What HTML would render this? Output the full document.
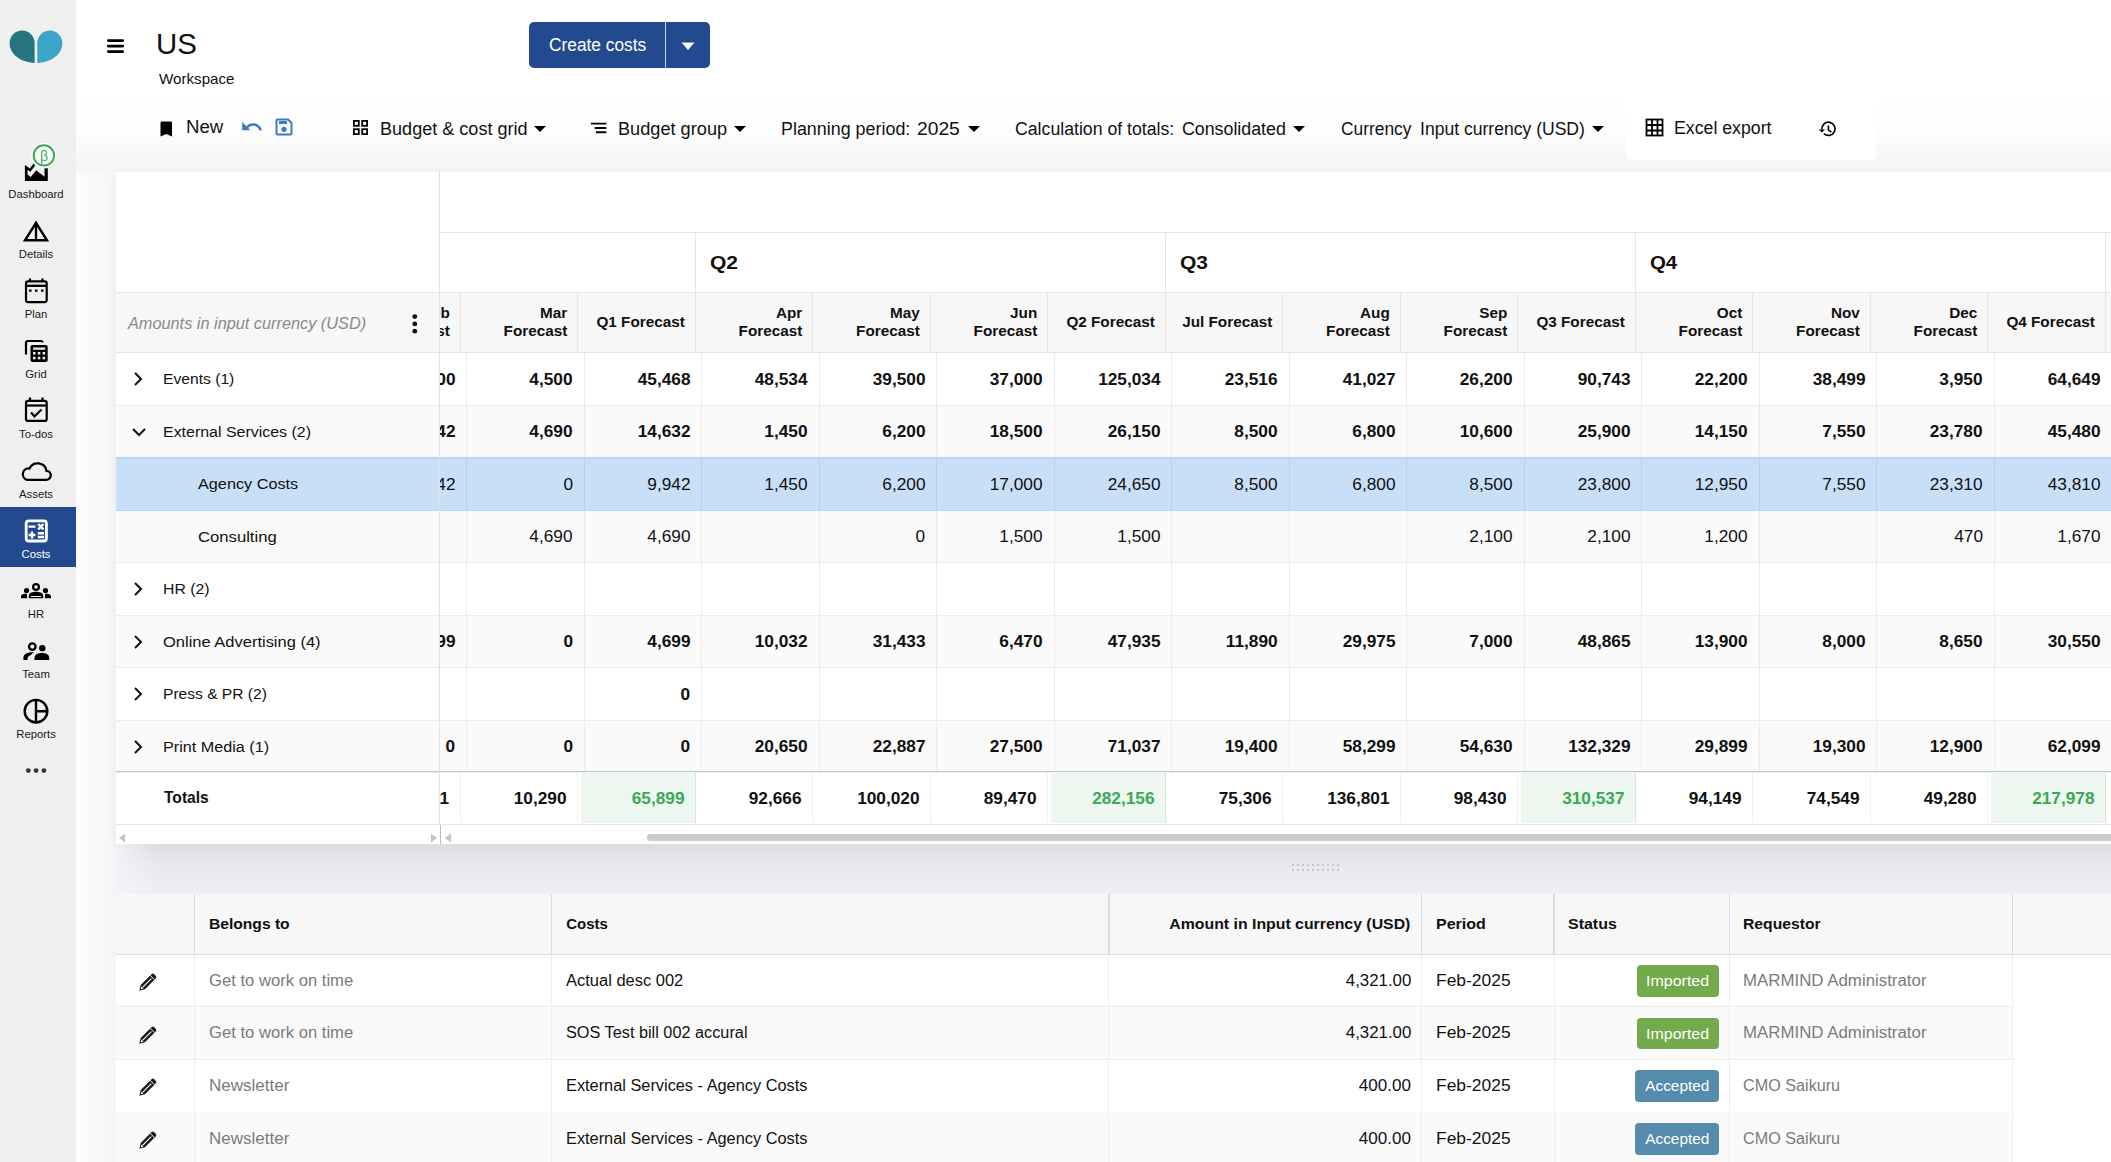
<!DOCTYPE html>
<html><head><meta charset="utf-8"><title>Costs</title>
<style>
html,body{margin:0;padding:0;}
body{width:2111px;height:1162px;overflow:hidden;position:relative;background:#fff;font-family:"Liberation Sans",sans-serif;}
.t{position:absolute;white-space:nowrap;}
.b{position:absolute;}
svg{position:absolute;overflow:visible;}
.clip{position:absolute;overflow:hidden;}
</style></head><body>
<div class="b" style="left:76.00px;top:0.00px;width:2035.00px;height:1162.00px;background:#f6f7f9;"></div>
<div class="b" style="left:76.00px;top:172.00px;width:40.00px;height:990.00px;background:linear-gradient(to right,#fcfcfd,#f4f5f8);"></div>
<div class="b" style="left:76.00px;top:0.00px;width:2035.00px;height:96.00px;background:#fff;"></div>
<div class="b" style="left:76.00px;top:96.00px;width:2035.00px;height:76.00px;background:linear-gradient(#fff,#fdfdfd 45%,#f4f4f5);"></div>
<div class="b" style="left:0.00px;top:0.00px;width:76.00px;height:1162.00px;background:#efeff0;"></div>
<div class="b" style="left:0.00px;top:507.00px;width:76.00px;height:60.00px;background:#234a8f;"></div>
<svg width="76" height="800" style="left:0;top:0" viewBox="0 0 76 800">
<path d="M34.6,63 L34.6,43 A12.5,12.5 0 0 0 9.6,43 C9.6,54 20,62 34.6,63 Z" fill="#277381"/>
<path d="M37.3,63 L37.3,43 A12.5,12.5 0 0 1 62.3,43 C62.3,54 52,62 37.3,63 Z" fill="#3ca4c6"/>
<path d="M24.9,165 L29.9,168.5 L33.5,163.4 L35.2,165.5 L30.3,171.8 L27.5,170.1 L27.5,174.6 L30.8,177 L36.2,170.3 L44.5,176.8 L44.5,168.6 L47.8,168.2 L47.8,180.9 L24.9,180.9 Z" fill="#000"/>
<circle cx="43.9" cy="155.4" r="12.6" fill="#fff"/>
<circle cx="43.9" cy="155.4" r="10.2" fill="#fff" stroke="#3aaa55" stroke-width="2"/>
<text x="44" y="161" font-size="14" text-anchor="middle" fill="#3aaa55" font-family="Liberation Sans">β</text>
<path d="M36,222.8 L46.9,240.2 L25.1,240.2 Z" fill="none" stroke="#000" stroke-width="2.5" stroke-linejoin="miter"/>
<path d="M36,224 L36,241" stroke="#000" stroke-width="2.3"/>
<rect x="26" y="281.3" width="20.7" height="20.8" rx="2" fill="none" stroke="#000" stroke-width="2.2"/>
<path d="M26,285.8 L46.7,285.8" stroke="#000" stroke-width="2.4"/>
<path d="M30,278.5 L30,282 M42.5,278.5 L42.5,282" stroke="#000" stroke-width="2.2"/>
<path d="M29,290.6 L31.5,290.6 M35,290.6 L37.5,290.6 M41,290.6 L43.5,290.6" stroke="#000" stroke-width="2.2"/>
<path d="M26,354.5 L26,343 A2,2 0 0 1 28,341 L41,341 A1.5,1.5 0 0 1 42.5,342.5" fill="none" stroke="#000" stroke-width="2.2"/>
<rect x="30.5" y="345" width="17.2" height="17" rx="2" fill="#000"/>
<rect x="33" y="347.5" width="12.2" height="2.2" fill="#efeff1"/>
<g fill="#efeff1"><rect x="33" y="352" width="2.5" height="2.5"/><rect x="37.8" y="352" width="2.5" height="2.5"/><rect x="42.6" y="352" width="2.5" height="2.5"/>
<rect x="33" y="356.8" width="2.5" height="2.5"/><rect x="37.8" y="356.8" width="2.5" height="2.5"/><rect x="42.6" y="356.8" width="2.5" height="2.5"/></g>
<rect x="26" y="400.9" width="20.7" height="20" rx="2" fill="none" stroke="#000" stroke-width="2.2"/>
<path d="M26,405.5 L46.7,405.5" stroke="#000" stroke-width="2.2"/>
<path d="M30,397.5 L30,401 M42.5,397.5 L42.5,401" stroke="#000" stroke-width="2.2"/>
<path d="M31,412.5 L34.5,416.5 L41.5,409.5" fill="none" stroke="#000" stroke-width="2.2"/>
<path d="M27,479.8 L46,479.8 A4.5,4.5 0 0 0 46.5,470.8 A9,9 0 0 0 29.5,468.5 A5.8,5.8 0 0 0 27,479.8 Z" fill="none" stroke="#000" stroke-width="2.3"/>
<rect x="26.2" y="520.8" width="20.2" height="20.2" rx="2.5" fill="none" stroke="#fff" stroke-width="2.8"/>
<g stroke="#fff" stroke-width="2.4"><path d="M28.6,526.6 L35.4,526.6 M38.2,524 L43.4,529.4 M43.4,524 L38.2,529.4 M28.6,535 L35.4,535 M32,531.6 L32,538.4 M37.8,533.2 L44,533.2 M37.8,537 L44,537"/></g>
<circle cx="36" cy="587" r="2.9" fill="none" stroke="#000" stroke-width="2.2"/>
<path d="M28.8,598.3 L28.8,596 C28.8,592.5 33,591.8 36,591.8 C39,591.8 43.2,592.5 43.2,596 L43.2,598.3 Z" fill="#000"/>
<path d="M31,596.5 L41,596.5" stroke="#efeff1" stroke-width="1"/>
<circle cx="26.5" cy="590.5" r="2.6" fill="#000"/><circle cx="45.5" cy="590.5" r="2.6" fill="#000"/>
<path d="M21,598.3 L21,596.5 C21,594.3 24,593.8 27,593.8 L27,598.3 Z M51,598.3 L51,596.5 C51,594.3 48,593.8 45,593.8 L45,598.3 Z" fill="#000"/>
<circle cx="32.3" cy="646.6" r="3.3" fill="none" stroke="#000" stroke-width="2.3"/>
<path d="M23.4,660 L23.4,657.5 C23.4,654 28,652.3 32,652.3 L34,652.3 L30,655.5 C28,656.5 27.5,657.3 27.5,660 Z" fill="#000"/>
<circle cx="42.3" cy="648.3" r="3.2" fill="#000"/>
<path d="M34.5,660 L34.5,658 C34.5,654 38.5,653 42,653 C45.5,653 49.2,654 49.2,658 L49.2,660 Z" fill="#000"/>
<circle cx="36" cy="711.2" r="11.3" fill="none" stroke="#000" stroke-width="2.4"/>
<path d="M36,700 L36,722.5 M36,711.2 L47.3,711.2" stroke="#000" stroke-width="2.4"/>
<circle cx="28.3" cy="770.6" r="2.4" fill="#333"/><circle cx="36.1" cy="770.6" r="2.4" fill="#333"/><circle cx="43.9" cy="770.6" r="2.4" fill="#333"/>
</svg>
<div class="t " style="left:-264.00px;width:600px;text-align:center;top:182.08px;font-size:11.3px;line-height:24px;font-weight:normal;color:#1a1a1a;font-style:normal;">Dashboard</div>
<div class="t " style="left:-264.00px;width:600px;text-align:center;top:242.08px;font-size:11.3px;line-height:24px;font-weight:normal;color:#1a1a1a;font-style:normal;">Details</div>
<div class="t " style="left:-264.00px;width:600px;text-align:center;top:302.08px;font-size:11.3px;line-height:24px;font-weight:normal;color:#1a1a1a;font-style:normal;">Plan</div>
<div class="t " style="left:-264.00px;width:600px;text-align:center;top:362.08px;font-size:11.3px;line-height:24px;font-weight:normal;color:#1a1a1a;font-style:normal;">Grid</div>
<div class="t " style="left:-264.00px;width:600px;text-align:center;top:422.08px;font-size:11.3px;line-height:24px;font-weight:normal;color:#1a1a1a;font-style:normal;">To-dos</div>
<div class="t " style="left:-264.00px;width:600px;text-align:center;top:482.08px;font-size:11.3px;line-height:24px;font-weight:normal;color:#1a1a1a;font-style:normal;">Assets</div>
<div class="t " style="left:-264.00px;width:600px;text-align:center;top:542.08px;font-size:11.3px;line-height:24px;font-weight:normal;color:#fff;font-style:normal;">Costs</div>
<div class="t " style="left:-264.00px;width:600px;text-align:center;top:602.08px;font-size:11.3px;line-height:24px;font-weight:normal;color:#1a1a1a;font-style:normal;">HR</div>
<div class="t " style="left:-264.00px;width:600px;text-align:center;top:662.08px;font-size:11.3px;line-height:24px;font-weight:normal;color:#1a1a1a;font-style:normal;">Team</div>
<div class="t " style="left:-264.00px;width:600px;text-align:center;top:722.08px;font-size:11.3px;line-height:24px;font-weight:normal;color:#1a1a1a;font-style:normal;">Reports</div>
<svg width="20" height="20" style="left:106px;top:37px" viewBox="0 0 20 20"><path d="M2.3,3.6 L16.7,3.6 M2.3,9.1 L16.7,9.1 M2.3,14.6 L16.7,14.6" stroke="#000" stroke-width="2.75" stroke-linecap="round"/></svg>
<div class="t " style="left:155.50px;top:32.40px;font-size:30px;line-height:24px;font-weight:normal;color:#111;font-style:normal;"><span style="display:inline-block;transform:scaleX(0.9792);transform-origin:left center">US</span></div>
<div class="t " style="left:158.50px;top:66.80px;font-size:15px;line-height:24px;font-weight:normal;color:#111;font-style:normal;"><span style="display:inline-block;transform:scaleX(1.0101);transform-origin:left center">Workspace</span></div>
<div class="b" style="left:529.00px;top:22.00px;width:181.00px;height:46.00px;background:#234a8f;border-radius:5px;"></div>
<div class="b" style="left:664.80px;top:22.00px;width:1.20px;height:46.00px;background:#c9d4e8;"></div>
<div class="t " style="left:549.00px;top:33.13px;font-size:17.5px;line-height:24px;font-weight:normal;color:#fff;font-style:normal;"><span style="display:inline-block;transform:scaleX(0.9899);transform-origin:left center">Create costs</span></div>
<svg width="14" height="9" style="left:681px;top:41.5px" viewBox="0 0 14 9"><path d="M0.5,0.5 L13.5,0.5 L7,8 Z" fill="#fff"/></svg>
<svg width="14" height="18" style="left:159px;top:119px" viewBox="0 0 14 18"><path d="M1.5,3.8 Q1.5,2.4 3,2.4 L11.5,2.4 Q13,2.4 13,3.8 L13,17.4 L7.25,15 L1.5,17.4 Z" fill="#000"/></svg>
<div class="t " style="left:185.50px;top:114.76px;font-size:18px;line-height:24px;font-weight:normal;color:#111;font-style:normal;"><span style="display:inline-block;transform:scaleX(1.0363);transform-origin:left center">New</span></div>
<svg width="22" height="14" style="left:241px;top:120px" viewBox="0 0 22 14"><path d="M5.4,8.2 C8.5,3.4 16.8,2.2 19.8,10.4" fill="none" stroke="#3d7ac4" stroke-width="2.5"/><path d="M1.2,1.9 L1.2,10.3 L9.4,10.3 Z" fill="#3d7ac4"/></svg>
<svg width="20" height="20" style="left:274px;top:117px" viewBox="0 0 20 20"><path d="M3.5,2.5 L14,2.5 L17.5,6 L17.5,16.5 Q17.5,17.5 16.5,17.5 L3.5,17.5 Q2.5,17.5 2.5,16.5 L2.5,3.5 Q2.5,2.5 3.5,2.5 Z" fill="none" stroke="#3d7ac4" stroke-width="2"/><rect x="5" y="4" width="8" height="3" fill="#3d7ac4"/><circle cx="10" cy="12.3" r="2.6" fill="#3d7ac4"/></svg>
<svg width="18" height="18" style="left:352px;top:119px" viewBox="0 0 18 18"><g fill="none" stroke="#000" stroke-width="1.8"><rect x="1.9" y="1.9" width="4.9" height="4.9"/><rect x="10.2" y="1.9" width="4.9" height="4.9"/><rect x="1.9" y="10.2" width="4.9" height="4.9"/><rect x="10.2" y="10.2" width="4.9" height="4.9"/></g></svg>
<div class="t " style="left:379.50px;top:116.96px;font-size:18px;line-height:24px;font-weight:normal;color:#111;font-style:normal;"><span style="display:inline-block;transform:scaleX(1.0032);transform-origin:left center">Budget &amp; cost grid</span></div>
<svg width="12" height="8" style="left:534px;top:125px" viewBox="0 0 12 8"><path d="M0,1 L12,1 L6,7 Z" fill="#000"/></svg>
<svg width="18" height="14" style="left:590px;top:122px" viewBox="0 0 18 14"><path d="M1,1.6 L16.4,1.6 M4.6,6 L16.4,6 M6,10.3 L16.4,10.3" stroke="#000" stroke-width="1.9"/></svg>
<div class="t " style="left:617.50px;top:116.96px;font-size:18px;line-height:24px;font-weight:normal;color:#111;font-style:normal;"><span style="display:inline-block;transform:scaleX(1.0092);transform-origin:left center">Budget group</span></div>
<svg width="12" height="8" style="left:734px;top:125px" viewBox="0 0 12 8"><path d="M0,1 L12,1 L6,7 Z" fill="#000"/></svg>
<div class="t " style="left:781.00px;top:116.96px;font-size:18px;line-height:24px;font-weight:normal;color:#111;font-style:normal;"><span style="display:inline-block;transform:scaleX(0.9939);transform-origin:left center">Planning period:</span></div>
<div class="t " style="left:916.50px;top:116.96px;font-size:18px;line-height:24px;font-weight:normal;color:#111;font-style:normal;"><span style="display:inline-block;transform:scaleX(1.0696);transform-origin:left center">2025</span></div>
<svg width="12" height="8" style="left:968px;top:125px" viewBox="0 0 12 8"><path d="M0,1 L12,1 L6,7 Z" fill="#000"/></svg>
<div class="t " style="left:1015.00px;top:116.96px;font-size:18px;line-height:24px;font-weight:normal;color:#111;font-style:normal;"><span style="display:inline-block;transform:scaleX(0.9827);transform-origin:left center">Calculation of totals:</span></div>
<div class="t " style="left:1182.00px;top:116.96px;font-size:18px;line-height:24px;font-weight:normal;color:#111;font-style:normal;"><span style="display:inline-block;transform:scaleX(0.9880);transform-origin:left center">Consolidated</span></div>
<svg width="12" height="8" style="left:1293px;top:125px" viewBox="0 0 12 8"><path d="M0,1 L12,1 L6,7 Z" fill="#000"/></svg>
<div class="t " style="left:1340.50px;top:116.96px;font-size:18px;line-height:24px;font-weight:normal;color:#111;font-style:normal;"><span style="display:inline-block;transform:scaleX(0.9643);transform-origin:left center">Currency</span></div>
<div class="t " style="left:1419.50px;top:116.96px;font-size:18px;line-height:24px;font-weight:normal;color:#111;font-style:normal;"><span style="display:inline-block;transform:scaleX(0.9754);transform-origin:left center">Input currency (USD)</span></div>
<svg width="12" height="8" style="left:1592px;top:125px" viewBox="0 0 12 8"><path d="M0,1 L12,1 L6,7 Z" fill="#000"/></svg>
<div class="b" style="left:1626.00px;top:98.00px;width:250.00px;height:61.50px;background:#fff;border-radius:5px;"></div>
<svg width="20" height="20" style="left:1645px;top:118px" viewBox="0 0 20 20"><g fill="none" stroke="#000" stroke-width="1.8"><rect x="1.5" y="1.5" width="16" height="16"/><path d="M7,1.5 L7,17.5 M12.5,1.5 L12.5,17.5 M1.5,7 L17.5,7 M1.5,12.5 L17.5,12.5"/></g></svg>
<div class="t " style="left:1673.50px;top:116.16px;font-size:18px;line-height:24px;font-weight:normal;color:#111;font-style:normal;"><span style="display:inline-block;transform:scaleX(0.9840);transform-origin:left center">Excel export</span></div>
<svg width="20" height="20" style="left:1818px;top:119px" viewBox="0 0 20 20"><path d="M3.9,10.4 A6.6,6.6 0 1 1 5.9,14.6" fill="none" stroke="#000" stroke-width="1.7"/><path d="M0.8,10.5 L7,10.5 L3.9,13.6 Z" fill="#000"/><path d="M10.4,6.6 L10.4,10.9 L13.4,13.2" fill="none" stroke="#000" stroke-width="1.7"/></svg>
<div class="b" style="left:116.00px;top:172.00px;width:1995.00px;height:672.00px;background:#fff;box-shadow:0 3px 8px rgba(0,0,0,0.06);"></div>
<div class="b" style="left:116.00px;top:293.00px;width:324.00px;height:59.50px;background:#f7f7f7;"></div>
<div class="b" style="left:440.00px;top:293.00px;width:1671.00px;height:59.50px;background:#f7f7f7;"></div>
<div class="b" style="left:116.00px;top:292.00px;width:1995.00px;height:1.30px;background:#e6e6e8;"></div>
<div class="b" style="left:440.00px;top:232.00px;width:1671.00px;height:1.30px;background:#e6e6e8;"></div>
<div class="b" style="left:116.00px;top:352.00px;width:1995.00px;height:1.30px;background:#e6e6e8;"></div>
<div class="b" style="left:694.80px;top:232.50px;width:1.20px;height:60.00px;background:#e6e6e8;"></div>
<div class="t " style="left:709.90px;top:250.81px;font-size:19px;line-height:24px;font-weight:bold;color:#111;font-style:normal;"><span style="display:inline-block;transform:scaleX(1.1069);transform-origin:left center">Q2</span></div>
<div class="b" style="left:1164.80px;top:232.50px;width:1.20px;height:60.00px;background:#e6e6e8;"></div>
<div class="t " style="left:1179.90px;top:250.81px;font-size:19px;line-height:24px;font-weight:bold;color:#111;font-style:normal;"><span style="display:inline-block;transform:scaleX(1.1069);transform-origin:left center">Q3</span></div>
<div class="b" style="left:1634.80px;top:232.50px;width:1.20px;height:60.00px;background:#e6e6e8;"></div>
<div class="t " style="left:1649.90px;top:250.81px;font-size:19px;line-height:24px;font-weight:bold;color:#111;font-style:normal;"><span style="display:inline-block;transform:scaleX(1.0729);transform-origin:left center">Q4</span></div>
<div class="b" style="left:2104.80px;top:232.50px;width:1.20px;height:60.00px;background:#e6e6e8;"></div>
<div class="clip" style="left:440px;top:0;width:1671px;height:1162px;">
<div class="b" style="left:19.80px;top:293.00px;width:1.20px;height:59.50px;background:#e6e6e8;"></div>
<div class="t " style="left:-590.20px;width:600px;text-align:right;top:300.90px;font-size:15.3px;line-height:24px;font-weight:bold;color:#111;font-style:normal;">Feb</div>
<div class="t " style="left:-590.20px;width:600px;text-align:right;top:319.10px;font-size:15.3px;line-height:24px;font-weight:bold;color:#111;font-style:normal;">Forecast</div>
<div class="b" style="left:137.30px;top:293.00px;width:1.20px;height:59.50px;background:#e6e6e8;"></div>
<div class="t " style="left:-472.70px;width:600px;text-align:right;top:300.90px;font-size:15.3px;line-height:24px;font-weight:bold;color:#111;font-style:normal;">Mar</div>
<div class="t " style="left:-472.70px;width:600px;text-align:right;top:319.10px;font-size:15.3px;line-height:24px;font-weight:bold;color:#111;font-style:normal;">Forecast</div>
<div class="b" style="left:254.80px;top:293.00px;width:1.20px;height:59.50px;background:#e6e6e8;"></div>
<div class="t " style="left:-355.20px;width:600px;text-align:right;top:309.90px;font-size:15.3px;line-height:24px;font-weight:bold;color:#111;font-style:normal;">Q1 Forecast</div>
<div class="b" style="left:372.30px;top:293.00px;width:1.20px;height:59.50px;background:#e6e6e8;"></div>
<div class="t " style="left:-237.70px;width:600px;text-align:right;top:300.90px;font-size:15.3px;line-height:24px;font-weight:bold;color:#111;font-style:normal;">Apr</div>
<div class="t " style="left:-237.70px;width:600px;text-align:right;top:319.10px;font-size:15.3px;line-height:24px;font-weight:bold;color:#111;font-style:normal;">Forecast</div>
<div class="b" style="left:489.80px;top:293.00px;width:1.20px;height:59.50px;background:#e6e6e8;"></div>
<div class="t " style="left:-120.20px;width:600px;text-align:right;top:300.90px;font-size:15.3px;line-height:24px;font-weight:bold;color:#111;font-style:normal;">May</div>
<div class="t " style="left:-120.20px;width:600px;text-align:right;top:319.10px;font-size:15.3px;line-height:24px;font-weight:bold;color:#111;font-style:normal;">Forecast</div>
<div class="b" style="left:607.30px;top:293.00px;width:1.20px;height:59.50px;background:#e6e6e8;"></div>
<div class="t " style="left:-2.70px;width:600px;text-align:right;top:300.90px;font-size:15.3px;line-height:24px;font-weight:bold;color:#111;font-style:normal;">Jun</div>
<div class="t " style="left:-2.70px;width:600px;text-align:right;top:319.10px;font-size:15.3px;line-height:24px;font-weight:bold;color:#111;font-style:normal;">Forecast</div>
<div class="b" style="left:724.80px;top:293.00px;width:1.20px;height:59.50px;background:#e6e6e8;"></div>
<div class="t " style="left:114.80px;width:600px;text-align:right;top:309.90px;font-size:15.3px;line-height:24px;font-weight:bold;color:#111;font-style:normal;">Q2 Forecast</div>
<div class="b" style="left:842.30px;top:293.00px;width:1.20px;height:59.50px;background:#e6e6e8;"></div>
<div class="t " style="left:232.30px;width:600px;text-align:right;top:309.90px;font-size:15.3px;line-height:24px;font-weight:bold;color:#111;font-style:normal;">Jul Forecast</div>
<div class="b" style="left:959.80px;top:293.00px;width:1.20px;height:59.50px;background:#e6e6e8;"></div>
<div class="t " style="left:349.80px;width:600px;text-align:right;top:300.90px;font-size:15.3px;line-height:24px;font-weight:bold;color:#111;font-style:normal;">Aug</div>
<div class="t " style="left:349.80px;width:600px;text-align:right;top:319.10px;font-size:15.3px;line-height:24px;font-weight:bold;color:#111;font-style:normal;">Forecast</div>
<div class="b" style="left:1077.30px;top:293.00px;width:1.20px;height:59.50px;background:#e6e6e8;"></div>
<div class="t " style="left:467.30px;width:600px;text-align:right;top:300.90px;font-size:15.3px;line-height:24px;font-weight:bold;color:#111;font-style:normal;">Sep</div>
<div class="t " style="left:467.30px;width:600px;text-align:right;top:319.10px;font-size:15.3px;line-height:24px;font-weight:bold;color:#111;font-style:normal;">Forecast</div>
<div class="b" style="left:1194.80px;top:293.00px;width:1.20px;height:59.50px;background:#e6e6e8;"></div>
<div class="t " style="left:584.80px;width:600px;text-align:right;top:309.90px;font-size:15.3px;line-height:24px;font-weight:bold;color:#111;font-style:normal;">Q3 Forecast</div>
<div class="b" style="left:1312.30px;top:293.00px;width:1.20px;height:59.50px;background:#e6e6e8;"></div>
<div class="t " style="left:702.30px;width:600px;text-align:right;top:300.90px;font-size:15.3px;line-height:24px;font-weight:bold;color:#111;font-style:normal;">Oct</div>
<div class="t " style="left:702.30px;width:600px;text-align:right;top:319.10px;font-size:15.3px;line-height:24px;font-weight:bold;color:#111;font-style:normal;">Forecast</div>
<div class="b" style="left:1429.80px;top:293.00px;width:1.20px;height:59.50px;background:#e6e6e8;"></div>
<div class="t " style="left:819.80px;width:600px;text-align:right;top:300.90px;font-size:15.3px;line-height:24px;font-weight:bold;color:#111;font-style:normal;">Nov</div>
<div class="t " style="left:819.80px;width:600px;text-align:right;top:319.10px;font-size:15.3px;line-height:24px;font-weight:bold;color:#111;font-style:normal;">Forecast</div>
<div class="b" style="left:1547.30px;top:293.00px;width:1.20px;height:59.50px;background:#e6e6e8;"></div>
<div class="t " style="left:937.30px;width:600px;text-align:right;top:300.90px;font-size:15.3px;line-height:24px;font-weight:bold;color:#111;font-style:normal;">Dec</div>
<div class="t " style="left:937.30px;width:600px;text-align:right;top:319.10px;font-size:15.3px;line-height:24px;font-weight:bold;color:#111;font-style:normal;">Forecast</div>
<div class="b" style="left:1664.80px;top:293.00px;width:1.20px;height:59.50px;background:#e6e6e8;"></div>
<div class="t " style="left:1054.80px;width:600px;text-align:right;top:309.90px;font-size:15.3px;line-height:24px;font-weight:bold;color:#111;font-style:normal;">Q4 Forecast</div>
<div class="b" style="left:1782.30px;top:293.00px;width:1.20px;height:59.50px;background:#e6e6e8;"></div>
<div class="t " style="left:1172.30px;width:600px;text-align:right;top:300.90px;font-size:15.3px;line-height:24px;font-weight:bold;color:#111;font-style:normal;">Jan</div>
<div class="t " style="left:1172.30px;width:600px;text-align:right;top:319.10px;font-size:15.3px;line-height:24px;font-weight:bold;color:#111;font-style:normal;">Forecast</div>
</div>
<div class="t " style="left:128.30px;top:311.55px;font-size:16px;line-height:24px;font-weight:normal;color:#8a8a8a;font-style:italic;"><span style="display:inline-block;transform:scaleX(1.0181);transform-origin:left center">Amounts in input currency (USD)</span></div>
<svg width="8" height="24" style="left:411px;top:312px" viewBox="0 0 8 24"><circle cx="3.8" cy="4.6" r="2.4" fill="#111"/><circle cx="3.8" cy="11.9" r="2.4" fill="#111"/><circle cx="3.8" cy="19.2" r="2.4" fill="#111"/></svg>
<div class="b" style="left:116.00px;top:353.00px;width:1995.00px;height:52.50px;background:#ffffff;"></div>
<div class="b" style="left:116.00px;top:404.80px;width:1995.00px;height:1.20px;background:#ececee;"></div>
<svg width="10" height="14" style="left:133px;top:372.25px" viewBox="0 0 10 14"><path d="M2,1 L8,7 L2,13" fill="none" stroke="#111" stroke-width="2"/></svg>
<div class="t " style="left:163.20px;top:367.21px;font-size:15.4px;line-height:24px;font-weight:normal;color:#111;font-style:normal;"><span style="display:inline-block;transform:scaleX(1.0166);transform-origin:left center">Events (1)</span></div>
<div class="clip" style="left:440px;top:353.00px;width:1671px;height:52.5px;">
<div class="b" style="left:26.00px;top:0.00px;width:1.20px;height:51.50px;background:#ececee;"></div>
<div class="t " style="left:-584.80px;width:600px;text-align:right;top:13.93px;font-size:16.2px;line-height:24px;font-weight:bold;color:#111;font-style:normal;"><span style="display:inline-block;transform:scaleX(1.0650);transform-origin:right center">4,500</span></div>
<div class="b" style="left:143.50px;top:0.00px;width:1.20px;height:51.50px;background:#ececee;"></div>
<div class="t " style="left:-467.30px;width:600px;text-align:right;top:13.93px;font-size:16.2px;line-height:24px;font-weight:bold;color:#111;font-style:normal;"><span style="display:inline-block;transform:scaleX(1.0650);transform-origin:right center">4,500</span></div>
<div class="b" style="left:261.00px;top:0.00px;width:1.20px;height:51.50px;background:#ececee;"></div>
<div class="t " style="left:-349.80px;width:600px;text-align:right;top:13.93px;font-size:16.2px;line-height:24px;font-weight:bold;color:#111;font-style:normal;"><span style="display:inline-block;transform:scaleX(1.0650);transform-origin:right center">45,468</span></div>
<div class="b" style="left:378.50px;top:0.00px;width:1.20px;height:51.50px;background:#ececee;"></div>
<div class="t " style="left:-232.30px;width:600px;text-align:right;top:13.93px;font-size:16.2px;line-height:24px;font-weight:bold;color:#111;font-style:normal;"><span style="display:inline-block;transform:scaleX(1.0650);transform-origin:right center">48,534</span></div>
<div class="b" style="left:496.00px;top:0.00px;width:1.20px;height:51.50px;background:#ececee;"></div>
<div class="t " style="left:-114.80px;width:600px;text-align:right;top:13.93px;font-size:16.2px;line-height:24px;font-weight:bold;color:#111;font-style:normal;"><span style="display:inline-block;transform:scaleX(1.0650);transform-origin:right center">39,500</span></div>
<div class="b" style="left:613.50px;top:0.00px;width:1.20px;height:51.50px;background:#ececee;"></div>
<div class="t " style="left:2.70px;width:600px;text-align:right;top:13.93px;font-size:16.2px;line-height:24px;font-weight:bold;color:#111;font-style:normal;"><span style="display:inline-block;transform:scaleX(1.0650);transform-origin:right center">37,000</span></div>
<div class="b" style="left:731.00px;top:0.00px;width:1.20px;height:51.50px;background:#ececee;"></div>
<div class="t " style="left:120.20px;width:600px;text-align:right;top:13.93px;font-size:16.2px;line-height:24px;font-weight:bold;color:#111;font-style:normal;"><span style="display:inline-block;transform:scaleX(1.0650);transform-origin:right center">125,034</span></div>
<div class="b" style="left:848.50px;top:0.00px;width:1.20px;height:51.50px;background:#ececee;"></div>
<div class="t " style="left:237.70px;width:600px;text-align:right;top:13.93px;font-size:16.2px;line-height:24px;font-weight:bold;color:#111;font-style:normal;"><span style="display:inline-block;transform:scaleX(1.0650);transform-origin:right center">23,516</span></div>
<div class="b" style="left:966.00px;top:0.00px;width:1.20px;height:51.50px;background:#ececee;"></div>
<div class="t " style="left:355.20px;width:600px;text-align:right;top:13.93px;font-size:16.2px;line-height:24px;font-weight:bold;color:#111;font-style:normal;"><span style="display:inline-block;transform:scaleX(1.0650);transform-origin:right center">41,027</span></div>
<div class="b" style="left:1083.50px;top:0.00px;width:1.20px;height:51.50px;background:#ececee;"></div>
<div class="t " style="left:472.70px;width:600px;text-align:right;top:13.93px;font-size:16.2px;line-height:24px;font-weight:bold;color:#111;font-style:normal;"><span style="display:inline-block;transform:scaleX(1.0650);transform-origin:right center">26,200</span></div>
<div class="b" style="left:1201.00px;top:0.00px;width:1.20px;height:51.50px;background:#ececee;"></div>
<div class="t " style="left:590.20px;width:600px;text-align:right;top:13.93px;font-size:16.2px;line-height:24px;font-weight:bold;color:#111;font-style:normal;"><span style="display:inline-block;transform:scaleX(1.0650);transform-origin:right center">90,743</span></div>
<div class="b" style="left:1318.50px;top:0.00px;width:1.20px;height:51.50px;background:#ececee;"></div>
<div class="t " style="left:707.70px;width:600px;text-align:right;top:13.93px;font-size:16.2px;line-height:24px;font-weight:bold;color:#111;font-style:normal;"><span style="display:inline-block;transform:scaleX(1.0650);transform-origin:right center">22,200</span></div>
<div class="b" style="left:1436.00px;top:0.00px;width:1.20px;height:51.50px;background:#ececee;"></div>
<div class="t " style="left:825.20px;width:600px;text-align:right;top:13.93px;font-size:16.2px;line-height:24px;font-weight:bold;color:#111;font-style:normal;"><span style="display:inline-block;transform:scaleX(1.0650);transform-origin:right center">38,499</span></div>
<div class="b" style="left:1553.50px;top:0.00px;width:1.20px;height:51.50px;background:#ececee;"></div>
<div class="t " style="left:942.70px;width:600px;text-align:right;top:13.93px;font-size:16.2px;line-height:24px;font-weight:bold;color:#111;font-style:normal;"><span style="display:inline-block;transform:scaleX(1.0650);transform-origin:right center">3,950</span></div>
<div class="b" style="left:1671.00px;top:0.00px;width:1.20px;height:51.50px;background:#ececee;"></div>
<div class="t " style="left:1060.20px;width:600px;text-align:right;top:13.93px;font-size:16.2px;line-height:24px;font-weight:bold;color:#111;font-style:normal;"><span style="display:inline-block;transform:scaleX(1.0650);transform-origin:right center">64,649</span></div>
</div>
<div class="b" style="left:116.00px;top:405.50px;width:1995.00px;height:52.50px;background:#fafafa;"></div>
<div class="b" style="left:116.00px;top:457.30px;width:1995.00px;height:1.20px;background:#ececee;"></div>
<svg width="14" height="10" style="left:131.5px;top:426.75px" viewBox="0 0 14 10"><path d="M1,2 L7,8 L13,2" fill="none" stroke="#111" stroke-width="2"/></svg>
<div class="t " style="left:163.20px;top:419.71px;font-size:15.4px;line-height:24px;font-weight:normal;color:#111;font-style:normal;"><span style="display:inline-block;transform:scaleX(1.0361);transform-origin:left center">External Services (2)</span></div>
<div class="clip" style="left:440px;top:405.50px;width:1671px;height:52.5px;">
<div class="b" style="left:26.00px;top:0.00px;width:1.20px;height:51.50px;background:#ececee;"></div>
<div class="t " style="left:-584.80px;width:600px;text-align:right;top:13.93px;font-size:16.2px;line-height:24px;font-weight:bold;color:#111;font-style:normal;"><span style="display:inline-block;transform:scaleX(1.0650);transform-origin:right center">4,642</span></div>
<div class="b" style="left:143.50px;top:0.00px;width:1.20px;height:51.50px;background:#ececee;"></div>
<div class="t " style="left:-467.30px;width:600px;text-align:right;top:13.93px;font-size:16.2px;line-height:24px;font-weight:bold;color:#111;font-style:normal;"><span style="display:inline-block;transform:scaleX(1.0650);transform-origin:right center">4,690</span></div>
<div class="b" style="left:261.00px;top:0.00px;width:1.20px;height:51.50px;background:#ececee;"></div>
<div class="t " style="left:-349.80px;width:600px;text-align:right;top:13.93px;font-size:16.2px;line-height:24px;font-weight:bold;color:#111;font-style:normal;"><span style="display:inline-block;transform:scaleX(1.0650);transform-origin:right center">14,632</span></div>
<div class="b" style="left:378.50px;top:0.00px;width:1.20px;height:51.50px;background:#ececee;"></div>
<div class="t " style="left:-232.30px;width:600px;text-align:right;top:13.93px;font-size:16.2px;line-height:24px;font-weight:bold;color:#111;font-style:normal;"><span style="display:inline-block;transform:scaleX(1.0650);transform-origin:right center">1,450</span></div>
<div class="b" style="left:496.00px;top:0.00px;width:1.20px;height:51.50px;background:#ececee;"></div>
<div class="t " style="left:-114.80px;width:600px;text-align:right;top:13.93px;font-size:16.2px;line-height:24px;font-weight:bold;color:#111;font-style:normal;"><span style="display:inline-block;transform:scaleX(1.0650);transform-origin:right center">6,200</span></div>
<div class="b" style="left:613.50px;top:0.00px;width:1.20px;height:51.50px;background:#ececee;"></div>
<div class="t " style="left:2.70px;width:600px;text-align:right;top:13.93px;font-size:16.2px;line-height:24px;font-weight:bold;color:#111;font-style:normal;"><span style="display:inline-block;transform:scaleX(1.0650);transform-origin:right center">18,500</span></div>
<div class="b" style="left:731.00px;top:0.00px;width:1.20px;height:51.50px;background:#ececee;"></div>
<div class="t " style="left:120.20px;width:600px;text-align:right;top:13.93px;font-size:16.2px;line-height:24px;font-weight:bold;color:#111;font-style:normal;"><span style="display:inline-block;transform:scaleX(1.0650);transform-origin:right center">26,150</span></div>
<div class="b" style="left:848.50px;top:0.00px;width:1.20px;height:51.50px;background:#ececee;"></div>
<div class="t " style="left:237.70px;width:600px;text-align:right;top:13.93px;font-size:16.2px;line-height:24px;font-weight:bold;color:#111;font-style:normal;"><span style="display:inline-block;transform:scaleX(1.0650);transform-origin:right center">8,500</span></div>
<div class="b" style="left:966.00px;top:0.00px;width:1.20px;height:51.50px;background:#ececee;"></div>
<div class="t " style="left:355.20px;width:600px;text-align:right;top:13.93px;font-size:16.2px;line-height:24px;font-weight:bold;color:#111;font-style:normal;"><span style="display:inline-block;transform:scaleX(1.0650);transform-origin:right center">6,800</span></div>
<div class="b" style="left:1083.50px;top:0.00px;width:1.20px;height:51.50px;background:#ececee;"></div>
<div class="t " style="left:472.70px;width:600px;text-align:right;top:13.93px;font-size:16.2px;line-height:24px;font-weight:bold;color:#111;font-style:normal;"><span style="display:inline-block;transform:scaleX(1.0650);transform-origin:right center">10,600</span></div>
<div class="b" style="left:1201.00px;top:0.00px;width:1.20px;height:51.50px;background:#ececee;"></div>
<div class="t " style="left:590.20px;width:600px;text-align:right;top:13.93px;font-size:16.2px;line-height:24px;font-weight:bold;color:#111;font-style:normal;"><span style="display:inline-block;transform:scaleX(1.0650);transform-origin:right center">25,900</span></div>
<div class="b" style="left:1318.50px;top:0.00px;width:1.20px;height:51.50px;background:#ececee;"></div>
<div class="t " style="left:707.70px;width:600px;text-align:right;top:13.93px;font-size:16.2px;line-height:24px;font-weight:bold;color:#111;font-style:normal;"><span style="display:inline-block;transform:scaleX(1.0650);transform-origin:right center">14,150</span></div>
<div class="b" style="left:1436.00px;top:0.00px;width:1.20px;height:51.50px;background:#ececee;"></div>
<div class="t " style="left:825.20px;width:600px;text-align:right;top:13.93px;font-size:16.2px;line-height:24px;font-weight:bold;color:#111;font-style:normal;"><span style="display:inline-block;transform:scaleX(1.0650);transform-origin:right center">7,550</span></div>
<div class="b" style="left:1553.50px;top:0.00px;width:1.20px;height:51.50px;background:#ececee;"></div>
<div class="t " style="left:942.70px;width:600px;text-align:right;top:13.93px;font-size:16.2px;line-height:24px;font-weight:bold;color:#111;font-style:normal;"><span style="display:inline-block;transform:scaleX(1.0650);transform-origin:right center">23,780</span></div>
<div class="b" style="left:1671.00px;top:0.00px;width:1.20px;height:51.50px;background:#ececee;"></div>
<div class="t " style="left:1060.20px;width:600px;text-align:right;top:13.93px;font-size:16.2px;line-height:24px;font-weight:bold;color:#111;font-style:normal;"><span style="display:inline-block;transform:scaleX(1.0650);transform-origin:right center">45,480</span></div>
</div>
<div class="b" style="left:116.00px;top:458.00px;width:1995.00px;height:52.50px;background:#c8dff8;"></div>
<div class="b" style="left:116.00px;top:509.80px;width:1995.00px;height:1.20px;background:#bcd4f0;"></div>
<div class="b" style="left:116.00px;top:457.40px;width:1995.00px;height:1.20px;background:#bcd4f0;"></div>
<div class="t " style="left:198.10px;top:472.21px;font-size:15.4px;line-height:24px;font-weight:normal;color:#111;font-style:normal;"><span style="display:inline-block;transform:scaleX(1.0555);transform-origin:left center">Agency Costs</span></div>
<div class="clip" style="left:440px;top:458.00px;width:1671px;height:52.5px;">
<div class="b" style="left:26.00px;top:0.00px;width:1.20px;height:51.50px;background:#b9cfe8;"></div>
<div class="t " style="left:-584.80px;width:600px;text-align:right;top:13.93px;font-size:16.2px;line-height:24px;font-weight:normal;color:#111;font-style:normal;"><span style="display:inline-block;transform:scaleX(1.0650);transform-origin:right center">4,642</span></div>
<div class="b" style="left:143.50px;top:0.00px;width:1.20px;height:51.50px;background:#b9cfe8;"></div>
<div class="t " style="left:-467.30px;width:600px;text-align:right;top:13.93px;font-size:16.2px;line-height:24px;font-weight:normal;color:#111;font-style:normal;"><span style="display:inline-block;transform:scaleX(1.0650);transform-origin:right center">0</span></div>
<div class="b" style="left:261.00px;top:0.00px;width:1.20px;height:51.50px;background:#b9cfe8;"></div>
<div class="t " style="left:-349.80px;width:600px;text-align:right;top:13.93px;font-size:16.2px;line-height:24px;font-weight:normal;color:#111;font-style:normal;"><span style="display:inline-block;transform:scaleX(1.0650);transform-origin:right center">9,942</span></div>
<div class="b" style="left:378.50px;top:0.00px;width:1.20px;height:51.50px;background:#b9cfe8;"></div>
<div class="t " style="left:-232.30px;width:600px;text-align:right;top:13.93px;font-size:16.2px;line-height:24px;font-weight:normal;color:#111;font-style:normal;"><span style="display:inline-block;transform:scaleX(1.0650);transform-origin:right center">1,450</span></div>
<div class="b" style="left:496.00px;top:0.00px;width:1.20px;height:51.50px;background:#b9cfe8;"></div>
<div class="t " style="left:-114.80px;width:600px;text-align:right;top:13.93px;font-size:16.2px;line-height:24px;font-weight:normal;color:#111;font-style:normal;"><span style="display:inline-block;transform:scaleX(1.0650);transform-origin:right center">6,200</span></div>
<div class="b" style="left:613.50px;top:0.00px;width:1.20px;height:51.50px;background:#b9cfe8;"></div>
<div class="t " style="left:2.70px;width:600px;text-align:right;top:13.93px;font-size:16.2px;line-height:24px;font-weight:normal;color:#111;font-style:normal;"><span style="display:inline-block;transform:scaleX(1.0650);transform-origin:right center">17,000</span></div>
<div class="b" style="left:731.00px;top:0.00px;width:1.20px;height:51.50px;background:#b9cfe8;"></div>
<div class="t " style="left:120.20px;width:600px;text-align:right;top:13.93px;font-size:16.2px;line-height:24px;font-weight:normal;color:#111;font-style:normal;"><span style="display:inline-block;transform:scaleX(1.0650);transform-origin:right center">24,650</span></div>
<div class="b" style="left:848.50px;top:0.00px;width:1.20px;height:51.50px;background:#b9cfe8;"></div>
<div class="t " style="left:237.70px;width:600px;text-align:right;top:13.93px;font-size:16.2px;line-height:24px;font-weight:normal;color:#111;font-style:normal;"><span style="display:inline-block;transform:scaleX(1.0650);transform-origin:right center">8,500</span></div>
<div class="b" style="left:966.00px;top:0.00px;width:1.20px;height:51.50px;background:#b9cfe8;"></div>
<div class="t " style="left:355.20px;width:600px;text-align:right;top:13.93px;font-size:16.2px;line-height:24px;font-weight:normal;color:#111;font-style:normal;"><span style="display:inline-block;transform:scaleX(1.0650);transform-origin:right center">6,800</span></div>
<div class="b" style="left:1083.50px;top:0.00px;width:1.20px;height:51.50px;background:#b9cfe8;"></div>
<div class="t " style="left:472.70px;width:600px;text-align:right;top:13.93px;font-size:16.2px;line-height:24px;font-weight:normal;color:#111;font-style:normal;"><span style="display:inline-block;transform:scaleX(1.0650);transform-origin:right center">8,500</span></div>
<div class="b" style="left:1201.00px;top:0.00px;width:1.20px;height:51.50px;background:#b9cfe8;"></div>
<div class="t " style="left:590.20px;width:600px;text-align:right;top:13.93px;font-size:16.2px;line-height:24px;font-weight:normal;color:#111;font-style:normal;"><span style="display:inline-block;transform:scaleX(1.0650);transform-origin:right center">23,800</span></div>
<div class="b" style="left:1318.50px;top:0.00px;width:1.20px;height:51.50px;background:#b9cfe8;"></div>
<div class="t " style="left:707.70px;width:600px;text-align:right;top:13.93px;font-size:16.2px;line-height:24px;font-weight:normal;color:#111;font-style:normal;"><span style="display:inline-block;transform:scaleX(1.0650);transform-origin:right center">12,950</span></div>
<div class="b" style="left:1436.00px;top:0.00px;width:1.20px;height:51.50px;background:#b9cfe8;"></div>
<div class="t " style="left:825.20px;width:600px;text-align:right;top:13.93px;font-size:16.2px;line-height:24px;font-weight:normal;color:#111;font-style:normal;"><span style="display:inline-block;transform:scaleX(1.0650);transform-origin:right center">7,550</span></div>
<div class="b" style="left:1553.50px;top:0.00px;width:1.20px;height:51.50px;background:#b9cfe8;"></div>
<div class="t " style="left:942.70px;width:600px;text-align:right;top:13.93px;font-size:16.2px;line-height:24px;font-weight:normal;color:#111;font-style:normal;"><span style="display:inline-block;transform:scaleX(1.0650);transform-origin:right center">23,310</span></div>
<div class="b" style="left:1671.00px;top:0.00px;width:1.20px;height:51.50px;background:#b9cfe8;"></div>
<div class="t " style="left:1060.20px;width:600px;text-align:right;top:13.93px;font-size:16.2px;line-height:24px;font-weight:normal;color:#111;font-style:normal;"><span style="display:inline-block;transform:scaleX(1.0650);transform-origin:right center">43,810</span></div>
</div>
<div class="b" style="left:116.00px;top:510.50px;width:1995.00px;height:52.50px;background:#fafafa;"></div>
<div class="b" style="left:116.00px;top:561.70px;width:1995.00px;height:2.20px;background:#ececee;"></div>
<div class="t " style="left:198.10px;top:524.71px;font-size:15.4px;line-height:24px;font-weight:normal;color:#111;font-style:normal;"><span style="display:inline-block;transform:scaleX(1.0823);transform-origin:left center">Consulting</span></div>
<div class="clip" style="left:440px;top:510.50px;width:1671px;height:52.5px;">
<div class="b" style="left:26.00px;top:0.00px;width:1.20px;height:51.50px;background:#ececee;"></div>
<div class="b" style="left:143.50px;top:0.00px;width:1.20px;height:51.50px;background:#ececee;"></div>
<div class="t " style="left:-467.30px;width:600px;text-align:right;top:13.93px;font-size:16.2px;line-height:24px;font-weight:normal;color:#111;font-style:normal;"><span style="display:inline-block;transform:scaleX(1.0650);transform-origin:right center">4,690</span></div>
<div class="b" style="left:261.00px;top:0.00px;width:1.20px;height:51.50px;background:#ececee;"></div>
<div class="t " style="left:-349.80px;width:600px;text-align:right;top:13.93px;font-size:16.2px;line-height:24px;font-weight:normal;color:#111;font-style:normal;"><span style="display:inline-block;transform:scaleX(1.0650);transform-origin:right center">4,690</span></div>
<div class="b" style="left:378.50px;top:0.00px;width:1.20px;height:51.50px;background:#ececee;"></div>
<div class="b" style="left:496.00px;top:0.00px;width:1.20px;height:51.50px;background:#ececee;"></div>
<div class="t " style="left:-114.80px;width:600px;text-align:right;top:13.93px;font-size:16.2px;line-height:24px;font-weight:normal;color:#111;font-style:normal;"><span style="display:inline-block;transform:scaleX(1.0650);transform-origin:right center">0</span></div>
<div class="b" style="left:613.50px;top:0.00px;width:1.20px;height:51.50px;background:#ececee;"></div>
<div class="t " style="left:2.70px;width:600px;text-align:right;top:13.93px;font-size:16.2px;line-height:24px;font-weight:normal;color:#111;font-style:normal;"><span style="display:inline-block;transform:scaleX(1.0650);transform-origin:right center">1,500</span></div>
<div class="b" style="left:731.00px;top:0.00px;width:1.20px;height:51.50px;background:#ececee;"></div>
<div class="t " style="left:120.20px;width:600px;text-align:right;top:13.93px;font-size:16.2px;line-height:24px;font-weight:normal;color:#111;font-style:normal;"><span style="display:inline-block;transform:scaleX(1.0650);transform-origin:right center">1,500</span></div>
<div class="b" style="left:848.50px;top:0.00px;width:1.20px;height:51.50px;background:#ececee;"></div>
<div class="b" style="left:966.00px;top:0.00px;width:1.20px;height:51.50px;background:#ececee;"></div>
<div class="b" style="left:1083.50px;top:0.00px;width:1.20px;height:51.50px;background:#ececee;"></div>
<div class="t " style="left:472.70px;width:600px;text-align:right;top:13.93px;font-size:16.2px;line-height:24px;font-weight:normal;color:#111;font-style:normal;"><span style="display:inline-block;transform:scaleX(1.0650);transform-origin:right center">2,100</span></div>
<div class="b" style="left:1201.00px;top:0.00px;width:1.20px;height:51.50px;background:#ececee;"></div>
<div class="t " style="left:590.20px;width:600px;text-align:right;top:13.93px;font-size:16.2px;line-height:24px;font-weight:normal;color:#111;font-style:normal;"><span style="display:inline-block;transform:scaleX(1.0650);transform-origin:right center">2,100</span></div>
<div class="b" style="left:1318.50px;top:0.00px;width:1.20px;height:51.50px;background:#ececee;"></div>
<div class="t " style="left:707.70px;width:600px;text-align:right;top:13.93px;font-size:16.2px;line-height:24px;font-weight:normal;color:#111;font-style:normal;"><span style="display:inline-block;transform:scaleX(1.0650);transform-origin:right center">1,200</span></div>
<div class="b" style="left:1436.00px;top:0.00px;width:1.20px;height:51.50px;background:#ececee;"></div>
<div class="b" style="left:1553.50px;top:0.00px;width:1.20px;height:51.50px;background:#ececee;"></div>
<div class="t " style="left:942.70px;width:600px;text-align:right;top:13.93px;font-size:16.2px;line-height:24px;font-weight:normal;color:#111;font-style:normal;"><span style="display:inline-block;transform:scaleX(1.0650);transform-origin:right center">470</span></div>
<div class="b" style="left:1671.00px;top:0.00px;width:1.20px;height:51.50px;background:#ececee;"></div>
<div class="t " style="left:1060.20px;width:600px;text-align:right;top:13.93px;font-size:16.2px;line-height:24px;font-weight:normal;color:#111;font-style:normal;"><span style="display:inline-block;transform:scaleX(1.0650);transform-origin:right center">1,670</span></div>
</div>
<div class="b" style="left:116.00px;top:563.00px;width:1995.00px;height:52.50px;background:#ffffff;"></div>
<div class="b" style="left:116.00px;top:614.80px;width:1995.00px;height:1.20px;background:#ececee;"></div>
<svg width="10" height="14" style="left:133px;top:582.25px" viewBox="0 0 10 14"><path d="M2,1 L8,7 L2,13" fill="none" stroke="#111" stroke-width="2"/></svg>
<div class="t " style="left:163.20px;top:577.21px;font-size:15.4px;line-height:24px;font-weight:normal;color:#111;font-style:normal;"><span style="display:inline-block;transform:scaleX(1.0283);transform-origin:left center">HR (2)</span></div>
<div class="clip" style="left:440px;top:563.00px;width:1671px;height:52.5px;">
<div class="b" style="left:26.00px;top:0.00px;width:1.20px;height:51.50px;background:#ececee;"></div>
<div class="b" style="left:143.50px;top:0.00px;width:1.20px;height:51.50px;background:#ececee;"></div>
<div class="b" style="left:261.00px;top:0.00px;width:1.20px;height:51.50px;background:#ececee;"></div>
<div class="b" style="left:378.50px;top:0.00px;width:1.20px;height:51.50px;background:#ececee;"></div>
<div class="b" style="left:496.00px;top:0.00px;width:1.20px;height:51.50px;background:#ececee;"></div>
<div class="b" style="left:613.50px;top:0.00px;width:1.20px;height:51.50px;background:#ececee;"></div>
<div class="b" style="left:731.00px;top:0.00px;width:1.20px;height:51.50px;background:#ececee;"></div>
<div class="b" style="left:848.50px;top:0.00px;width:1.20px;height:51.50px;background:#ececee;"></div>
<div class="b" style="left:966.00px;top:0.00px;width:1.20px;height:51.50px;background:#ececee;"></div>
<div class="b" style="left:1083.50px;top:0.00px;width:1.20px;height:51.50px;background:#ececee;"></div>
<div class="b" style="left:1201.00px;top:0.00px;width:1.20px;height:51.50px;background:#ececee;"></div>
<div class="b" style="left:1318.50px;top:0.00px;width:1.20px;height:51.50px;background:#ececee;"></div>
<div class="b" style="left:1436.00px;top:0.00px;width:1.20px;height:51.50px;background:#ececee;"></div>
<div class="b" style="left:1553.50px;top:0.00px;width:1.20px;height:51.50px;background:#ececee;"></div>
<div class="b" style="left:1671.00px;top:0.00px;width:1.20px;height:51.50px;background:#ececee;"></div>
</div>
<div class="b" style="left:116.00px;top:615.50px;width:1995.00px;height:52.50px;background:#fafafa;"></div>
<div class="b" style="left:116.00px;top:667.30px;width:1995.00px;height:1.20px;background:#ececee;"></div>
<svg width="10" height="14" style="left:133px;top:634.75px" viewBox="0 0 10 14"><path d="M2,1 L8,7 L2,13" fill="none" stroke="#111" stroke-width="2"/></svg>
<div class="t " style="left:163.20px;top:629.71px;font-size:15.4px;line-height:24px;font-weight:normal;color:#111;font-style:normal;"><span style="display:inline-block;transform:scaleX(1.0711);transform-origin:left center">Online Advertising (4)</span></div>
<div class="clip" style="left:440px;top:615.50px;width:1671px;height:52.5px;">
<div class="b" style="left:26.00px;top:0.00px;width:1.20px;height:51.50px;background:#ececee;"></div>
<div class="t " style="left:-584.80px;width:600px;text-align:right;top:13.93px;font-size:16.2px;line-height:24px;font-weight:bold;color:#111;font-style:normal;"><span style="display:inline-block;transform:scaleX(1.0650);transform-origin:right center">4,699</span></div>
<div class="b" style="left:143.50px;top:0.00px;width:1.20px;height:51.50px;background:#ececee;"></div>
<div class="t " style="left:-467.30px;width:600px;text-align:right;top:13.93px;font-size:16.2px;line-height:24px;font-weight:bold;color:#111;font-style:normal;"><span style="display:inline-block;transform:scaleX(1.0650);transform-origin:right center">0</span></div>
<div class="b" style="left:261.00px;top:0.00px;width:1.20px;height:51.50px;background:#ececee;"></div>
<div class="t " style="left:-349.80px;width:600px;text-align:right;top:13.93px;font-size:16.2px;line-height:24px;font-weight:bold;color:#111;font-style:normal;"><span style="display:inline-block;transform:scaleX(1.0650);transform-origin:right center">4,699</span></div>
<div class="b" style="left:378.50px;top:0.00px;width:1.20px;height:51.50px;background:#ececee;"></div>
<div class="t " style="left:-232.30px;width:600px;text-align:right;top:13.93px;font-size:16.2px;line-height:24px;font-weight:bold;color:#111;font-style:normal;"><span style="display:inline-block;transform:scaleX(1.0650);transform-origin:right center">10,032</span></div>
<div class="b" style="left:496.00px;top:0.00px;width:1.20px;height:51.50px;background:#ececee;"></div>
<div class="t " style="left:-114.80px;width:600px;text-align:right;top:13.93px;font-size:16.2px;line-height:24px;font-weight:bold;color:#111;font-style:normal;"><span style="display:inline-block;transform:scaleX(1.0650);transform-origin:right center">31,433</span></div>
<div class="b" style="left:613.50px;top:0.00px;width:1.20px;height:51.50px;background:#ececee;"></div>
<div class="t " style="left:2.70px;width:600px;text-align:right;top:13.93px;font-size:16.2px;line-height:24px;font-weight:bold;color:#111;font-style:normal;"><span style="display:inline-block;transform:scaleX(1.0650);transform-origin:right center">6,470</span></div>
<div class="b" style="left:731.00px;top:0.00px;width:1.20px;height:51.50px;background:#ececee;"></div>
<div class="t " style="left:120.20px;width:600px;text-align:right;top:13.93px;font-size:16.2px;line-height:24px;font-weight:bold;color:#111;font-style:normal;"><span style="display:inline-block;transform:scaleX(1.0650);transform-origin:right center">47,935</span></div>
<div class="b" style="left:848.50px;top:0.00px;width:1.20px;height:51.50px;background:#ececee;"></div>
<div class="t " style="left:237.70px;width:600px;text-align:right;top:13.93px;font-size:16.2px;line-height:24px;font-weight:bold;color:#111;font-style:normal;"><span style="display:inline-block;transform:scaleX(1.0650);transform-origin:right center">11,890</span></div>
<div class="b" style="left:966.00px;top:0.00px;width:1.20px;height:51.50px;background:#ececee;"></div>
<div class="t " style="left:355.20px;width:600px;text-align:right;top:13.93px;font-size:16.2px;line-height:24px;font-weight:bold;color:#111;font-style:normal;"><span style="display:inline-block;transform:scaleX(1.0650);transform-origin:right center">29,975</span></div>
<div class="b" style="left:1083.50px;top:0.00px;width:1.20px;height:51.50px;background:#ececee;"></div>
<div class="t " style="left:472.70px;width:600px;text-align:right;top:13.93px;font-size:16.2px;line-height:24px;font-weight:bold;color:#111;font-style:normal;"><span style="display:inline-block;transform:scaleX(1.0650);transform-origin:right center">7,000</span></div>
<div class="b" style="left:1201.00px;top:0.00px;width:1.20px;height:51.50px;background:#ececee;"></div>
<div class="t " style="left:590.20px;width:600px;text-align:right;top:13.93px;font-size:16.2px;line-height:24px;font-weight:bold;color:#111;font-style:normal;"><span style="display:inline-block;transform:scaleX(1.0650);transform-origin:right center">48,865</span></div>
<div class="b" style="left:1318.50px;top:0.00px;width:1.20px;height:51.50px;background:#ececee;"></div>
<div class="t " style="left:707.70px;width:600px;text-align:right;top:13.93px;font-size:16.2px;line-height:24px;font-weight:bold;color:#111;font-style:normal;"><span style="display:inline-block;transform:scaleX(1.0650);transform-origin:right center">13,900</span></div>
<div class="b" style="left:1436.00px;top:0.00px;width:1.20px;height:51.50px;background:#ececee;"></div>
<div class="t " style="left:825.20px;width:600px;text-align:right;top:13.93px;font-size:16.2px;line-height:24px;font-weight:bold;color:#111;font-style:normal;"><span style="display:inline-block;transform:scaleX(1.0650);transform-origin:right center">8,000</span></div>
<div class="b" style="left:1553.50px;top:0.00px;width:1.20px;height:51.50px;background:#ececee;"></div>
<div class="t " style="left:942.70px;width:600px;text-align:right;top:13.93px;font-size:16.2px;line-height:24px;font-weight:bold;color:#111;font-style:normal;"><span style="display:inline-block;transform:scaleX(1.0650);transform-origin:right center">8,650</span></div>
<div class="b" style="left:1671.00px;top:0.00px;width:1.20px;height:51.50px;background:#ececee;"></div>
<div class="t " style="left:1060.20px;width:600px;text-align:right;top:13.93px;font-size:16.2px;line-height:24px;font-weight:bold;color:#111;font-style:normal;"><span style="display:inline-block;transform:scaleX(1.0650);transform-origin:right center">30,550</span></div>
</div>
<div class="b" style="left:116.00px;top:668.00px;width:1995.00px;height:52.50px;background:#ffffff;"></div>
<div class="b" style="left:116.00px;top:719.80px;width:1995.00px;height:1.20px;background:#ececee;"></div>
<svg width="10" height="14" style="left:133px;top:687.25px" viewBox="0 0 10 14"><path d="M2,1 L8,7 L2,13" fill="none" stroke="#111" stroke-width="2"/></svg>
<div class="t " style="left:163.20px;top:682.21px;font-size:15.4px;line-height:24px;font-weight:normal;color:#111;font-style:normal;"><span style="display:inline-block;transform:scaleX(1.0123);transform-origin:left center">Press &amp; PR (2)</span></div>
<div class="clip" style="left:440px;top:668.00px;width:1671px;height:52.5px;">
<div class="b" style="left:26.00px;top:0.00px;width:1.20px;height:51.50px;background:#ececee;"></div>
<div class="b" style="left:143.50px;top:0.00px;width:1.20px;height:51.50px;background:#ececee;"></div>
<div class="b" style="left:261.00px;top:0.00px;width:1.20px;height:51.50px;background:#ececee;"></div>
<div class="t " style="left:-349.80px;width:600px;text-align:right;top:13.93px;font-size:16.2px;line-height:24px;font-weight:bold;color:#111;font-style:normal;"><span style="display:inline-block;transform:scaleX(1.0650);transform-origin:right center">0</span></div>
<div class="b" style="left:378.50px;top:0.00px;width:1.20px;height:51.50px;background:#ececee;"></div>
<div class="b" style="left:496.00px;top:0.00px;width:1.20px;height:51.50px;background:#ececee;"></div>
<div class="b" style="left:613.50px;top:0.00px;width:1.20px;height:51.50px;background:#ececee;"></div>
<div class="b" style="left:731.00px;top:0.00px;width:1.20px;height:51.50px;background:#ececee;"></div>
<div class="b" style="left:848.50px;top:0.00px;width:1.20px;height:51.50px;background:#ececee;"></div>
<div class="b" style="left:966.00px;top:0.00px;width:1.20px;height:51.50px;background:#ececee;"></div>
<div class="b" style="left:1083.50px;top:0.00px;width:1.20px;height:51.50px;background:#ececee;"></div>
<div class="b" style="left:1201.00px;top:0.00px;width:1.20px;height:51.50px;background:#ececee;"></div>
<div class="b" style="left:1318.50px;top:0.00px;width:1.20px;height:51.50px;background:#ececee;"></div>
<div class="b" style="left:1436.00px;top:0.00px;width:1.20px;height:51.50px;background:#ececee;"></div>
<div class="b" style="left:1553.50px;top:0.00px;width:1.20px;height:51.50px;background:#ececee;"></div>
<div class="b" style="left:1671.00px;top:0.00px;width:1.20px;height:51.50px;background:#ececee;"></div>
</div>
<div class="b" style="left:116.00px;top:720.50px;width:1995.00px;height:52.50px;background:#fafafa;"></div>
<div class="b" style="left:116.00px;top:772.30px;width:1995.00px;height:1.20px;background:#ececee;"></div>
<svg width="10" height="14" style="left:133px;top:739.75px" viewBox="0 0 10 14"><path d="M2,1 L8,7 L2,13" fill="none" stroke="#111" stroke-width="2"/></svg>
<div class="t " style="left:163.20px;top:734.71px;font-size:15.4px;line-height:24px;font-weight:normal;color:#111;font-style:normal;"><span style="display:inline-block;transform:scaleX(1.0509);transform-origin:left center">Print Media (1)</span></div>
<div class="clip" style="left:440px;top:720.50px;width:1671px;height:52.5px;">
<div class="b" style="left:26.00px;top:0.00px;width:1.20px;height:51.50px;background:#ececee;"></div>
<div class="t " style="left:-584.80px;width:600px;text-align:right;top:13.93px;font-size:16.2px;line-height:24px;font-weight:bold;color:#111;font-style:normal;"><span style="display:inline-block;transform:scaleX(1.0650);transform-origin:right center">0</span></div>
<div class="b" style="left:143.50px;top:0.00px;width:1.20px;height:51.50px;background:#ececee;"></div>
<div class="t " style="left:-467.30px;width:600px;text-align:right;top:13.93px;font-size:16.2px;line-height:24px;font-weight:bold;color:#111;font-style:normal;"><span style="display:inline-block;transform:scaleX(1.0650);transform-origin:right center">0</span></div>
<div class="b" style="left:261.00px;top:0.00px;width:1.20px;height:51.50px;background:#ececee;"></div>
<div class="t " style="left:-349.80px;width:600px;text-align:right;top:13.93px;font-size:16.2px;line-height:24px;font-weight:bold;color:#111;font-style:normal;"><span style="display:inline-block;transform:scaleX(1.0650);transform-origin:right center">0</span></div>
<div class="b" style="left:378.50px;top:0.00px;width:1.20px;height:51.50px;background:#ececee;"></div>
<div class="t " style="left:-232.30px;width:600px;text-align:right;top:13.93px;font-size:16.2px;line-height:24px;font-weight:bold;color:#111;font-style:normal;"><span style="display:inline-block;transform:scaleX(1.0650);transform-origin:right center">20,650</span></div>
<div class="b" style="left:496.00px;top:0.00px;width:1.20px;height:51.50px;background:#ececee;"></div>
<div class="t " style="left:-114.80px;width:600px;text-align:right;top:13.93px;font-size:16.2px;line-height:24px;font-weight:bold;color:#111;font-style:normal;"><span style="display:inline-block;transform:scaleX(1.0650);transform-origin:right center">22,887</span></div>
<div class="b" style="left:613.50px;top:0.00px;width:1.20px;height:51.50px;background:#ececee;"></div>
<div class="t " style="left:2.70px;width:600px;text-align:right;top:13.93px;font-size:16.2px;line-height:24px;font-weight:bold;color:#111;font-style:normal;"><span style="display:inline-block;transform:scaleX(1.0650);transform-origin:right center">27,500</span></div>
<div class="b" style="left:731.00px;top:0.00px;width:1.20px;height:51.50px;background:#ececee;"></div>
<div class="t " style="left:120.20px;width:600px;text-align:right;top:13.93px;font-size:16.2px;line-height:24px;font-weight:bold;color:#111;font-style:normal;"><span style="display:inline-block;transform:scaleX(1.0650);transform-origin:right center">71,037</span></div>
<div class="b" style="left:848.50px;top:0.00px;width:1.20px;height:51.50px;background:#ececee;"></div>
<div class="t " style="left:237.70px;width:600px;text-align:right;top:13.93px;font-size:16.2px;line-height:24px;font-weight:bold;color:#111;font-style:normal;"><span style="display:inline-block;transform:scaleX(1.0650);transform-origin:right center">19,400</span></div>
<div class="b" style="left:966.00px;top:0.00px;width:1.20px;height:51.50px;background:#ececee;"></div>
<div class="t " style="left:355.20px;width:600px;text-align:right;top:13.93px;font-size:16.2px;line-height:24px;font-weight:bold;color:#111;font-style:normal;"><span style="display:inline-block;transform:scaleX(1.0650);transform-origin:right center">58,299</span></div>
<div class="b" style="left:1083.50px;top:0.00px;width:1.20px;height:51.50px;background:#ececee;"></div>
<div class="t " style="left:472.70px;width:600px;text-align:right;top:13.93px;font-size:16.2px;line-height:24px;font-weight:bold;color:#111;font-style:normal;"><span style="display:inline-block;transform:scaleX(1.0650);transform-origin:right center">54,630</span></div>
<div class="b" style="left:1201.00px;top:0.00px;width:1.20px;height:51.50px;background:#ececee;"></div>
<div class="t " style="left:590.20px;width:600px;text-align:right;top:13.93px;font-size:16.2px;line-height:24px;font-weight:bold;color:#111;font-style:normal;"><span style="display:inline-block;transform:scaleX(1.0650);transform-origin:right center">132,329</span></div>
<div class="b" style="left:1318.50px;top:0.00px;width:1.20px;height:51.50px;background:#ececee;"></div>
<div class="t " style="left:707.70px;width:600px;text-align:right;top:13.93px;font-size:16.2px;line-height:24px;font-weight:bold;color:#111;font-style:normal;"><span style="display:inline-block;transform:scaleX(1.0650);transform-origin:right center">29,899</span></div>
<div class="b" style="left:1436.00px;top:0.00px;width:1.20px;height:51.50px;background:#ececee;"></div>
<div class="t " style="left:825.20px;width:600px;text-align:right;top:13.93px;font-size:16.2px;line-height:24px;font-weight:bold;color:#111;font-style:normal;"><span style="display:inline-block;transform:scaleX(1.0650);transform-origin:right center">19,300</span></div>
<div class="b" style="left:1553.50px;top:0.00px;width:1.20px;height:51.50px;background:#ececee;"></div>
<div class="t " style="left:942.70px;width:600px;text-align:right;top:13.93px;font-size:16.2px;line-height:24px;font-weight:bold;color:#111;font-style:normal;"><span style="display:inline-block;transform:scaleX(1.0650);transform-origin:right center">12,900</span></div>
<div class="b" style="left:1671.00px;top:0.00px;width:1.20px;height:51.50px;background:#ececee;"></div>
<div class="t " style="left:1060.20px;width:600px;text-align:right;top:13.93px;font-size:16.2px;line-height:24px;font-weight:bold;color:#111;font-style:normal;"><span style="display:inline-block;transform:scaleX(1.0650);transform-origin:right center">62,099</span></div>
</div>
<div class="b" style="left:116.00px;top:770.50px;width:1995.00px;height:1.20px;background:#c3c8d1;"></div>
<div class="t " style="left:163.50px;top:786.09px;font-size:15.6px;line-height:24px;font-weight:bold;color:#111;font-style:normal;"><span style="display:inline-block;transform:scaleX(1.0002);transform-origin:left center">Totals</span></div>
<div class="clip" style="left:440px;top:771.90px;width:1671px;height:51.5px;">
<div class="b" style="left:19.80px;top:0.00px;width:1.20px;height:51.50px;background:#f0f0f2;"></div>
<div class="t " style="left:-590.60px;width:600px;text-align:right;top:13.98px;font-size:16.2px;line-height:24px;font-weight:bold;color:#111;font-style:normal;"><span style="display:inline-block;transform:scaleX(1.0650);transform-origin:right center">11</span></div>
<div class="b" style="left:137.30px;top:0.00px;width:1.20px;height:51.50px;background:#f0f0f2;"></div>
<div class="t " style="left:-473.10px;width:600px;text-align:right;top:13.98px;font-size:16.2px;line-height:24px;font-weight:bold;color:#111;font-style:normal;"><span style="display:inline-block;transform:scaleX(1.0650);transform-origin:right center">10,290</span></div>
<div class="b" style="left:140.90px;top:0.00px;width:114.00px;height:51.50px;background:#edf6ef;"></div>
<div class="b" style="left:254.80px;top:0.00px;width:1.20px;height:51.50px;background:#d7e8db;"></div>
<div class="t " style="left:-355.60px;width:600px;text-align:right;top:13.98px;font-size:16.2px;line-height:24px;font-weight:bold;color:#3aa856;font-style:normal;"><span style="display:inline-block;transform:scaleX(1.0650);transform-origin:right center">65,899</span></div>
<div class="b" style="left:372.30px;top:0.00px;width:1.20px;height:51.50px;background:#f0f0f2;"></div>
<div class="t " style="left:-238.10px;width:600px;text-align:right;top:13.98px;font-size:16.2px;line-height:24px;font-weight:bold;color:#111;font-style:normal;"><span style="display:inline-block;transform:scaleX(1.0650);transform-origin:right center">92,666</span></div>
<div class="b" style="left:489.80px;top:0.00px;width:1.20px;height:51.50px;background:#f0f0f2;"></div>
<div class="t " style="left:-120.60px;width:600px;text-align:right;top:13.98px;font-size:16.2px;line-height:24px;font-weight:bold;color:#111;font-style:normal;"><span style="display:inline-block;transform:scaleX(1.0650);transform-origin:right center">100,020</span></div>
<div class="b" style="left:607.30px;top:0.00px;width:1.20px;height:51.50px;background:#f0f0f2;"></div>
<div class="t " style="left:-3.10px;width:600px;text-align:right;top:13.98px;font-size:16.2px;line-height:24px;font-weight:bold;color:#111;font-style:normal;"><span style="display:inline-block;transform:scaleX(1.0650);transform-origin:right center">89,470</span></div>
<div class="b" style="left:610.90px;top:0.00px;width:114.00px;height:51.50px;background:#edf6ef;"></div>
<div class="b" style="left:724.80px;top:0.00px;width:1.20px;height:51.50px;background:#d7e8db;"></div>
<div class="t " style="left:114.40px;width:600px;text-align:right;top:13.98px;font-size:16.2px;line-height:24px;font-weight:bold;color:#3aa856;font-style:normal;"><span style="display:inline-block;transform:scaleX(1.0650);transform-origin:right center">282,156</span></div>
<div class="b" style="left:842.30px;top:0.00px;width:1.20px;height:51.50px;background:#f0f0f2;"></div>
<div class="t " style="left:231.90px;width:600px;text-align:right;top:13.98px;font-size:16.2px;line-height:24px;font-weight:bold;color:#111;font-style:normal;"><span style="display:inline-block;transform:scaleX(1.0650);transform-origin:right center">75,306</span></div>
<div class="b" style="left:959.80px;top:0.00px;width:1.20px;height:51.50px;background:#f0f0f2;"></div>
<div class="t " style="left:349.40px;width:600px;text-align:right;top:13.98px;font-size:16.2px;line-height:24px;font-weight:bold;color:#111;font-style:normal;"><span style="display:inline-block;transform:scaleX(1.0650);transform-origin:right center">136,801</span></div>
<div class="b" style="left:1077.30px;top:0.00px;width:1.20px;height:51.50px;background:#f0f0f2;"></div>
<div class="t " style="left:466.90px;width:600px;text-align:right;top:13.98px;font-size:16.2px;line-height:24px;font-weight:bold;color:#111;font-style:normal;"><span style="display:inline-block;transform:scaleX(1.0650);transform-origin:right center">98,430</span></div>
<div class="b" style="left:1080.90px;top:0.00px;width:114.00px;height:51.50px;background:#edf6ef;"></div>
<div class="b" style="left:1194.80px;top:0.00px;width:1.20px;height:51.50px;background:#d7e8db;"></div>
<div class="t " style="left:584.40px;width:600px;text-align:right;top:13.98px;font-size:16.2px;line-height:24px;font-weight:bold;color:#3aa856;font-style:normal;"><span style="display:inline-block;transform:scaleX(1.0650);transform-origin:right center">310,537</span></div>
<div class="b" style="left:1312.30px;top:0.00px;width:1.20px;height:51.50px;background:#f0f0f2;"></div>
<div class="t " style="left:701.90px;width:600px;text-align:right;top:13.98px;font-size:16.2px;line-height:24px;font-weight:bold;color:#111;font-style:normal;"><span style="display:inline-block;transform:scaleX(1.0650);transform-origin:right center">94,149</span></div>
<div class="b" style="left:1429.80px;top:0.00px;width:1.20px;height:51.50px;background:#f0f0f2;"></div>
<div class="t " style="left:819.40px;width:600px;text-align:right;top:13.98px;font-size:16.2px;line-height:24px;font-weight:bold;color:#111;font-style:normal;"><span style="display:inline-block;transform:scaleX(1.0650);transform-origin:right center">74,549</span></div>
<div class="b" style="left:1547.30px;top:0.00px;width:1.20px;height:51.50px;background:#f0f0f2;"></div>
<div class="t " style="left:936.90px;width:600px;text-align:right;top:13.98px;font-size:16.2px;line-height:24px;font-weight:bold;color:#111;font-style:normal;"><span style="display:inline-block;transform:scaleX(1.0650);transform-origin:right center">49,280</span></div>
<div class="b" style="left:1550.90px;top:0.00px;width:114.00px;height:51.50px;background:#edf6ef;"></div>
<div class="b" style="left:1664.80px;top:0.00px;width:1.20px;height:51.50px;background:#d7e8db;"></div>
<div class="t " style="left:1054.40px;width:600px;text-align:right;top:13.98px;font-size:16.2px;line-height:24px;font-weight:bold;color:#3aa856;font-style:normal;"><span style="display:inline-block;transform:scaleX(1.0650);transform-origin:right center">217,978</span></div>
</div>
<div class="b" style="left:116.00px;top:824.00px;width:1995.00px;height:1.30px;background:#e6e6e8;"></div>
<div class="b" style="left:439.00px;top:172.00px;width:1.30px;height:652.00px;background:#e2e2e6;"></div>
<div class="b" style="left:440.00px;top:825.00px;width:1.30px;height:19.00px;background:#b9bdc8;"></div>
<svg width="8" height="10" style="left:118px;top:833px" viewBox="0 0 8 10"><path d="M7,0.5 L7,9.5 L1,5 Z" fill="#c4c4c4"/></svg>
<svg width="8" height="10" style="left:429.5px;top:833px" viewBox="0 0 8 10"><path d="M1,0.5 L1,9.5 L7,5 Z" fill="#c4c4c4"/></svg>
<svg width="8" height="10" style="left:443.5px;top:833px" viewBox="0 0 8 10"><path d="M7,0.5 L7,9.5 L1,5 Z" fill="#c4c4c4"/></svg>
<div class="b" style="left:647.00px;top:834.20px;width:1600.00px;height:6.80px;background:#cbcbcb;border-radius:3.4px;"></div>
<div class="b" style="left:116.00px;top:844.00px;width:1995.00px;height:50.00px;background:linear-gradient(#dbdce0,#e7e8eb 35%,#eeeff2);"></div>
<div class="b" style="left:116.00px;top:844.00px;width:40.00px;height:50.00px;background:linear-gradient(to right,rgba(244,245,248,0.85),rgba(244,245,248,0));"></div>
<svg width="50" height="8" style="left:1292px;top:863.5px" viewBox="0 0 50 8"><g fill="#c6c6c9"><rect x="0" y="0" width="2" height="2"/><rect x="0" y="5" width="2" height="2"/><rect x="5" y="0" width="2" height="2"/><rect x="5" y="5" width="2" height="2"/><rect x="10" y="0" width="2" height="2"/><rect x="10" y="5" width="2" height="2"/><rect x="15" y="0" width="2" height="2"/><rect x="15" y="5" width="2" height="2"/><rect x="20" y="0" width="2" height="2"/><rect x="20" y="5" width="2" height="2"/><rect x="25" y="0" width="2" height="2"/><rect x="25" y="5" width="2" height="2"/><rect x="30" y="0" width="2" height="2"/><rect x="30" y="5" width="2" height="2"/><rect x="35" y="0" width="2" height="2"/><rect x="35" y="5" width="2" height="2"/><rect x="40" y="0" width="2" height="2"/><rect x="40" y="5" width="2" height="2"/><rect x="45" y="0" width="2" height="2"/><rect x="45" y="5" width="2" height="2"/></g></svg>
<div class="b" style="left:116.00px;top:894.00px;width:1995.00px;height:268.00px;background:#fff;"></div>
<div class="b" style="left:116.00px;top:894.00px;width:1995.00px;height:60.50px;background:#f7f7f7;"></div>
<div class="b" style="left:116.00px;top:953.80px;width:1995.00px;height:1.30px;background:#dedee2;"></div>
<div class="b" style="left:193.65px;top:894.00px;width:1.30px;height:60.00px;background:#dcdce0;"></div>
<div class="b" style="left:550.75px;top:894.00px;width:1.30px;height:60.00px;background:#dcdce0;"></div>
<div class="b" style="left:1107.90px;top:894.00px;width:2.00px;height:60.00px;background:#dcdce0;"></div>
<div class="b" style="left:1421.15px;top:894.00px;width:1.30px;height:60.00px;background:#dcdce0;"></div>
<div class="b" style="left:1553.35px;top:894.00px;width:1.30px;height:60.00px;background:#dcdce0;"></div>
<div class="b" style="left:1728.75px;top:894.00px;width:1.30px;height:60.00px;background:#dcdce0;"></div>
<div class="b" style="left:2011.75px;top:894.00px;width:1.30px;height:60.00px;background:#dcdce0;"></div>
<div class="t " style="left:208.50px;top:912.10px;font-size:15px;line-height:24px;font-weight:bold;color:#111;font-style:normal;"><span style="display:inline-block;transform:scaleX(1.0407);transform-origin:left center">Belongs to</span></div>
<div class="t " style="left:566.20px;top:912.10px;font-size:15px;line-height:24px;font-weight:bold;color:#111;font-style:normal;">Costs</div>
<div class="t " style="left:810.80px;width:600px;text-align:right;top:912.10px;font-size:15px;line-height:24px;font-weight:bold;color:#111;font-style:normal;"><span style="display:inline-block;transform:scaleX(1.0554);transform-origin:right center">Amount in Input currency (USD)</span></div>
<div class="t " style="left:1435.80px;top:912.10px;font-size:15px;line-height:24px;font-weight:bold;color:#111;font-style:normal;"><span style="display:inline-block;transform:scaleX(1.0680);transform-origin:left center">Period</span></div>
<div class="t " style="left:1568.00px;top:912.10px;font-size:15px;line-height:24px;font-weight:bold;color:#111;font-style:normal;"><span style="display:inline-block;transform:scaleX(1.0644);transform-origin:left center">Status</span></div>
<div class="t " style="left:1742.80px;top:912.10px;font-size:15px;line-height:24px;font-weight:bold;color:#111;font-style:normal;"><span style="display:inline-block;transform:scaleX(1.0464);transform-origin:left center">Requestor</span></div>
<div class="b" style="left:116.00px;top:954.50px;width:1897.00px;height:52.60px;background:#fff;"></div>
<div class="b" style="left:116.00px;top:1006.40px;width:1898.00px;height:1.30px;background:#ededef;"></div>
<div class="b" style="left:193.80px;top:955.50px;width:1.10px;height:50.60px;background:#ededef;"></div>
<div class="b" style="left:550.90px;top:955.50px;width:1.10px;height:50.60px;background:#ededef;"></div>
<div class="b" style="left:1108.40px;top:955.50px;width:1.10px;height:50.60px;background:#ededef;"></div>
<div class="b" style="left:1421.30px;top:955.50px;width:1.10px;height:50.60px;background:#ededef;"></div>
<div class="b" style="left:1553.50px;top:955.50px;width:1.10px;height:50.60px;background:#ededef;"></div>
<div class="b" style="left:1728.90px;top:955.50px;width:1.10px;height:50.60px;background:#ededef;"></div>
<div class="b" style="left:2011.90px;top:955.50px;width:1.10px;height:50.60px;background:#ededef;"></div>
<svg width="20" height="20" style="left:138px;top:972.10px" viewBox="0 0 20 20"><path d="M1.3,18.7 L2.7,13.1 L13.5,2.3 Q14.9,0.9 16.3,2.3 L17.7,3.7 Q19.1,5.1 17.7,6.5 L6.9,17.3 Z" fill="#1a1a1a"/><path d="M4.6,15.4 L13.3,6.7" stroke="#fff" stroke-width="1.1"/><path d="M12.3,3.5 L16.5,7.7" stroke="#fff" stroke-width="1"/><path d="M3.4,14.6 L5.4,16.6 L2.6,17.4 Z" fill="#fff"/></svg>
<div class="t " style="left:208.50px;top:968.85px;font-size:16px;line-height:24px;font-weight:normal;color:#7a7a7a;font-style:normal;"><span style="display:inline-block;transform:scaleX(1.0395);transform-origin:left center">Get to work on time</span></div>
<div class="t " style="left:565.80px;top:968.85px;font-size:16px;line-height:24px;font-weight:normal;color:#111;font-style:normal;"><span style="display:inline-block;transform:scaleX(1.0299);transform-origin:left center">Actual desc 002</span></div>
<div class="t " style="left:810.80px;width:600px;text-align:right;top:968.85px;font-size:16px;line-height:24px;font-weight:normal;color:#111;font-style:normal;"><span style="display:inline-block;transform:scaleX(1.0514);transform-origin:right center">4,321.00</span></div>
<div class="t " style="left:1435.60px;top:968.85px;font-size:16px;line-height:24px;font-weight:normal;color:#111;font-style:normal;"><span style="display:inline-block;transform:scaleX(1.0892);transform-origin:left center">Feb-2025</span></div>
<div class="b" style="left:1636.90px;top:965.20px;width:81.90px;height:31.70px;background:#73aa4b;border-radius:4px;"></div>
<div class="t " style="left:1377.60px;width:600px;text-align:center;top:968.90px;font-size:15px;line-height:24px;font-weight:normal;color:#fff;font-style:normal;"><span style="display:inline-block;transform:scaleX(1.0667);transform-origin:center center">Imported</span></div>
<div class="t " style="left:1742.80px;top:968.85px;font-size:16px;line-height:24px;font-weight:normal;color:#7a7a7a;font-style:normal;"><span style="display:inline-block;transform:scaleX(1.0532);transform-origin:left center">MARMIND Administrator</span></div>
<div class="b" style="left:116.00px;top:1007.10px;width:1897.00px;height:52.60px;background:#fafafa;"></div>
<div class="b" style="left:116.00px;top:1059.00px;width:1898.00px;height:1.30px;background:#ededef;"></div>
<div class="b" style="left:193.80px;top:1008.10px;width:1.10px;height:50.60px;background:#ededef;"></div>
<div class="b" style="left:550.90px;top:1008.10px;width:1.10px;height:50.60px;background:#ededef;"></div>
<div class="b" style="left:1108.40px;top:1008.10px;width:1.10px;height:50.60px;background:#ededef;"></div>
<div class="b" style="left:1421.30px;top:1008.10px;width:1.10px;height:50.60px;background:#ededef;"></div>
<div class="b" style="left:1553.50px;top:1008.10px;width:1.10px;height:50.60px;background:#ededef;"></div>
<div class="b" style="left:1728.90px;top:1008.10px;width:1.10px;height:50.60px;background:#ededef;"></div>
<div class="b" style="left:2011.90px;top:1008.10px;width:1.10px;height:50.60px;background:#ededef;"></div>
<svg width="20" height="20" style="left:138px;top:1024.70px" viewBox="0 0 20 20"><path d="M1.3,18.7 L2.7,13.1 L13.5,2.3 Q14.9,0.9 16.3,2.3 L17.7,3.7 Q19.1,5.1 17.7,6.5 L6.9,17.3 Z" fill="#1a1a1a"/><path d="M4.6,15.4 L13.3,6.7" stroke="#fff" stroke-width="1.1"/><path d="M12.3,3.5 L16.5,7.7" stroke="#fff" stroke-width="1"/><path d="M3.4,14.6 L5.4,16.6 L2.6,17.4 Z" fill="#fff"/></svg>
<div class="t " style="left:208.50px;top:1021.45px;font-size:16px;line-height:24px;font-weight:normal;color:#7a7a7a;font-style:normal;"><span style="display:inline-block;transform:scaleX(1.0395);transform-origin:left center">Get to work on time</span></div>
<div class="t " style="left:565.80px;top:1021.45px;font-size:16px;line-height:24px;font-weight:normal;color:#111;font-style:normal;"><span style="display:inline-block;transform:scaleX(1.0170);transform-origin:left center">SOS Test bill 002 accural</span></div>
<div class="t " style="left:810.80px;width:600px;text-align:right;top:1021.45px;font-size:16px;line-height:24px;font-weight:normal;color:#111;font-style:normal;"><span style="display:inline-block;transform:scaleX(1.0514);transform-origin:right center">4,321.00</span></div>
<div class="t " style="left:1435.60px;top:1021.45px;font-size:16px;line-height:24px;font-weight:normal;color:#111;font-style:normal;"><span style="display:inline-block;transform:scaleX(1.0892);transform-origin:left center">Feb-2025</span></div>
<div class="b" style="left:1636.90px;top:1017.80px;width:81.90px;height:31.70px;background:#73aa4b;border-radius:4px;"></div>
<div class="t " style="left:1377.60px;width:600px;text-align:center;top:1021.50px;font-size:15px;line-height:24px;font-weight:normal;color:#fff;font-style:normal;"><span style="display:inline-block;transform:scaleX(1.0667);transform-origin:center center">Imported</span></div>
<div class="t " style="left:1742.80px;top:1021.45px;font-size:16px;line-height:24px;font-weight:normal;color:#7a7a7a;font-style:normal;"><span style="display:inline-block;transform:scaleX(1.0532);transform-origin:left center">MARMIND Administrator</span></div>
<div class="b" style="left:116.00px;top:1059.70px;width:1897.00px;height:52.60px;background:#fff;"></div>
<div class="b" style="left:116.00px;top:1111.60px;width:1898.00px;height:1.30px;background:#ededef;"></div>
<div class="b" style="left:193.80px;top:1060.70px;width:1.10px;height:50.60px;background:#ededef;"></div>
<div class="b" style="left:550.90px;top:1060.70px;width:1.10px;height:50.60px;background:#ededef;"></div>
<div class="b" style="left:1108.40px;top:1060.70px;width:1.10px;height:50.60px;background:#ededef;"></div>
<div class="b" style="left:1421.30px;top:1060.70px;width:1.10px;height:50.60px;background:#ededef;"></div>
<div class="b" style="left:1553.50px;top:1060.70px;width:1.10px;height:50.60px;background:#ededef;"></div>
<div class="b" style="left:1728.90px;top:1060.70px;width:1.10px;height:50.60px;background:#ededef;"></div>
<div class="b" style="left:2011.90px;top:1060.70px;width:1.10px;height:50.60px;background:#ededef;"></div>
<svg width="20" height="20" style="left:138px;top:1077.30px" viewBox="0 0 20 20"><path d="M1.3,18.7 L2.7,13.1 L13.5,2.3 Q14.9,0.9 16.3,2.3 L17.7,3.7 Q19.1,5.1 17.7,6.5 L6.9,17.3 Z" fill="#1a1a1a"/><path d="M4.6,15.4 L13.3,6.7" stroke="#fff" stroke-width="1.1"/><path d="M12.3,3.5 L16.5,7.7" stroke="#fff" stroke-width="1"/><path d="M3.4,14.6 L5.4,16.6 L2.6,17.4 Z" fill="#fff"/></svg>
<div class="t " style="left:208.50px;top:1074.05px;font-size:16px;line-height:24px;font-weight:normal;color:#7a7a7a;font-style:normal;"><span style="display:inline-block;transform:scaleX(1.0624);transform-origin:left center">Newsletter</span></div>
<div class="t " style="left:565.80px;top:1074.05px;font-size:16px;line-height:24px;font-weight:normal;color:#111;font-style:normal;"><span style="display:inline-block;transform:scaleX(1.0204);transform-origin:left center">External Services - Agency Costs</span></div>
<div class="t " style="left:810.80px;width:600px;text-align:right;top:1074.05px;font-size:16px;line-height:24px;font-weight:normal;color:#111;font-style:normal;"><span style="display:inline-block;transform:scaleX(1.0667);transform-origin:right center">400.00</span></div>
<div class="t " style="left:1435.60px;top:1074.05px;font-size:16px;line-height:24px;font-weight:normal;color:#111;font-style:normal;"><span style="display:inline-block;transform:scaleX(1.0892);transform-origin:left center">Feb-2025</span></div>
<div class="b" style="left:1635.00px;top:1070.40px;width:83.80px;height:31.70px;background:#568cab;border-radius:4px;"></div>
<div class="t " style="left:1377.60px;width:600px;text-align:center;top:1074.10px;font-size:15px;line-height:24px;font-weight:normal;color:#fff;font-style:normal;"><span style="display:inline-block;transform:scaleX(1.0251);transform-origin:center center">Accepted</span></div>
<div class="t " style="left:1742.80px;top:1074.05px;font-size:16px;line-height:24px;font-weight:normal;color:#7a7a7a;font-style:normal;"><span style="display:inline-block;transform:scaleX(1.0112);transform-origin:left center">CMO Saikuru</span></div>
<div class="b" style="left:116.00px;top:1112.30px;width:1897.00px;height:52.60px;background:#fafafa;"></div>
<div class="b" style="left:116.00px;top:1164.20px;width:1898.00px;height:1.30px;background:#ededef;"></div>
<div class="b" style="left:193.80px;top:1113.30px;width:1.10px;height:50.60px;background:#ededef;"></div>
<div class="b" style="left:550.90px;top:1113.30px;width:1.10px;height:50.60px;background:#ededef;"></div>
<div class="b" style="left:1108.40px;top:1113.30px;width:1.10px;height:50.60px;background:#ededef;"></div>
<div class="b" style="left:1421.30px;top:1113.30px;width:1.10px;height:50.60px;background:#ededef;"></div>
<div class="b" style="left:1553.50px;top:1113.30px;width:1.10px;height:50.60px;background:#ededef;"></div>
<div class="b" style="left:1728.90px;top:1113.30px;width:1.10px;height:50.60px;background:#ededef;"></div>
<div class="b" style="left:2011.90px;top:1113.30px;width:1.10px;height:50.60px;background:#ededef;"></div>
<svg width="20" height="20" style="left:138px;top:1129.90px" viewBox="0 0 20 20"><path d="M1.3,18.7 L2.7,13.1 L13.5,2.3 Q14.9,0.9 16.3,2.3 L17.7,3.7 Q19.1,5.1 17.7,6.5 L6.9,17.3 Z" fill="#1a1a1a"/><path d="M4.6,15.4 L13.3,6.7" stroke="#fff" stroke-width="1.1"/><path d="M12.3,3.5 L16.5,7.7" stroke="#fff" stroke-width="1"/><path d="M3.4,14.6 L5.4,16.6 L2.6,17.4 Z" fill="#fff"/></svg>
<div class="t " style="left:208.50px;top:1126.65px;font-size:16px;line-height:24px;font-weight:normal;color:#7a7a7a;font-style:normal;"><span style="display:inline-block;transform:scaleX(1.0624);transform-origin:left center">Newsletter</span></div>
<div class="t " style="left:565.80px;top:1126.65px;font-size:16px;line-height:24px;font-weight:normal;color:#111;font-style:normal;"><span style="display:inline-block;transform:scaleX(1.0204);transform-origin:left center">External Services - Agency Costs</span></div>
<div class="t " style="left:810.80px;width:600px;text-align:right;top:1126.65px;font-size:16px;line-height:24px;font-weight:normal;color:#111;font-style:normal;"><span style="display:inline-block;transform:scaleX(1.0667);transform-origin:right center">400.00</span></div>
<div class="t " style="left:1435.60px;top:1126.65px;font-size:16px;line-height:24px;font-weight:normal;color:#111;font-style:normal;"><span style="display:inline-block;transform:scaleX(1.0892);transform-origin:left center">Feb-2025</span></div>
<div class="b" style="left:1635.00px;top:1123.00px;width:83.80px;height:31.70px;background:#568cab;border-radius:4px;"></div>
<div class="t " style="left:1377.60px;width:600px;text-align:center;top:1126.70px;font-size:15px;line-height:24px;font-weight:normal;color:#fff;font-style:normal;"><span style="display:inline-block;transform:scaleX(1.0251);transform-origin:center center">Accepted</span></div>
<div class="t " style="left:1742.80px;top:1126.65px;font-size:16px;line-height:24px;font-weight:normal;color:#7a7a7a;font-style:normal;"><span style="display:inline-block;transform:scaleX(1.0112);transform-origin:left center">CMO Saikuru</span></div>
</body></html>
